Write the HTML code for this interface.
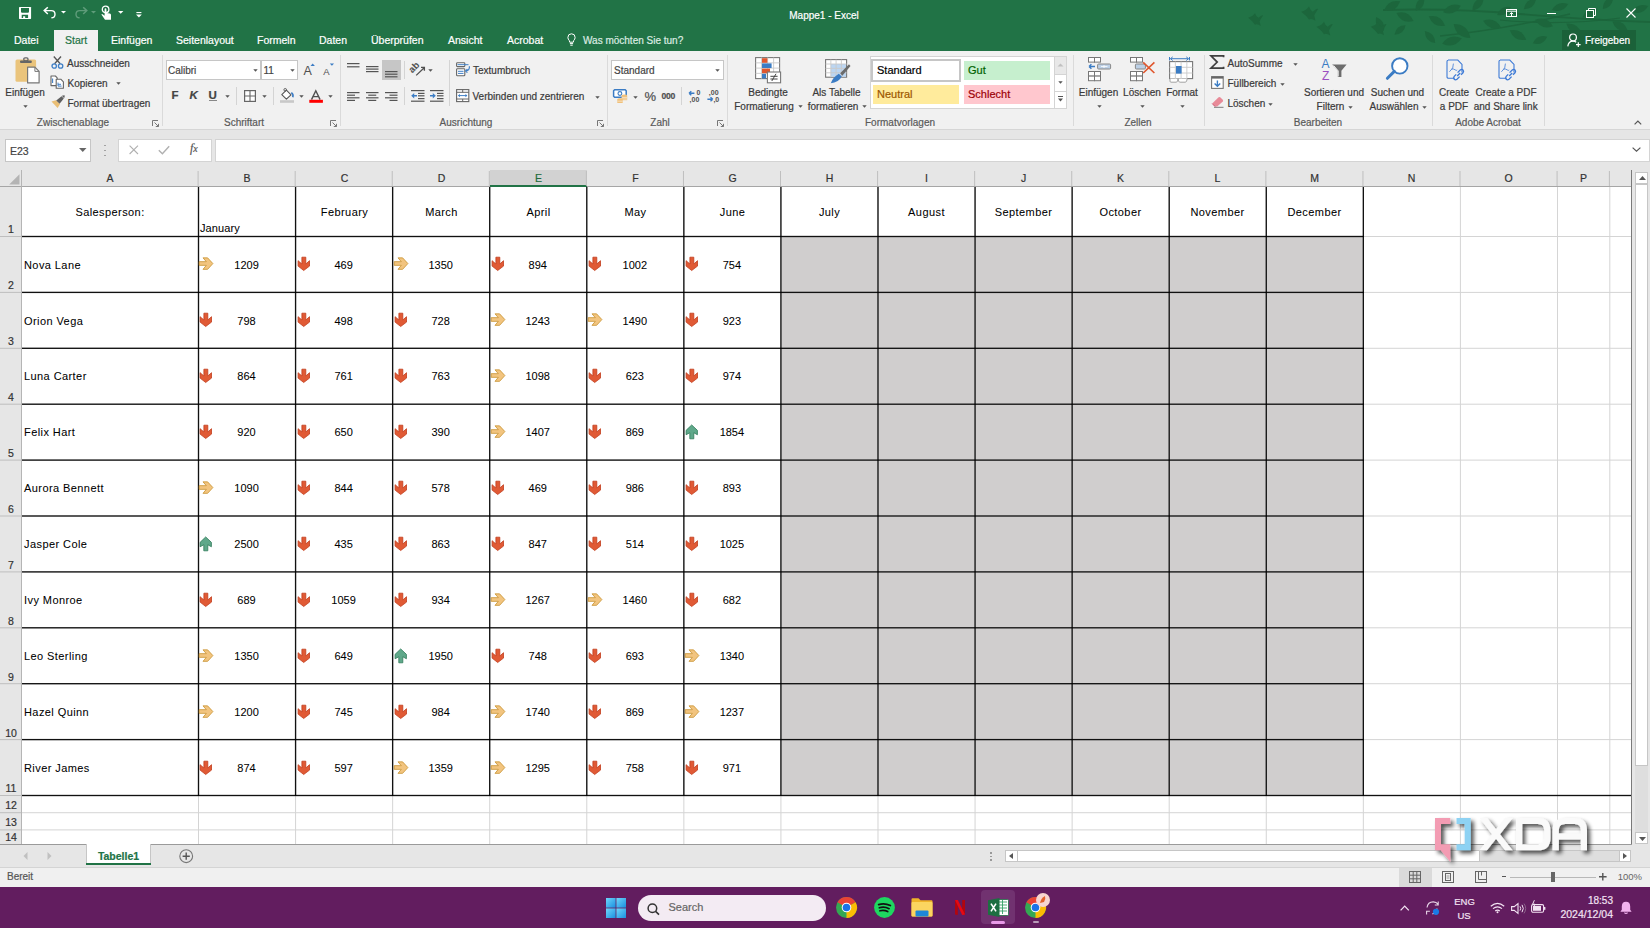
<!DOCTYPE html><html><head><meta charset="utf-8"><style>
*{margin:0;padding:0;box-sizing:border-box}
html,body{width:1650px;height:928px;overflow:hidden;background:#fff}
body{position:relative;font-family:"Liberation Sans",sans-serif}
body div{position:absolute}
.t{white-space:nowrap;line-height:1;-webkit-text-stroke:0.2px currentColor}
svg{position:absolute;overflow:visible}
</style></head><body>
<div style="left:0px;top:0px;width:1650px;height:51px;background:#217346"></div>
<svg style="left:0px;top:0px;" width="1650" height="50" viewBox="0 0 1650 50"><path d="M1383 10 Q1450 8 1520 14 T1650 22" stroke="#1c663c" stroke-width="1.8" fill="none"/><path d="M1440 36 Q1500 30 1570 14" stroke="#1c663c" stroke-width="1.4" fill="none"/><path d="M1500 20 Q1560 26 1620 18" stroke="#1c663c" stroke-width="1.2" fill="none"/><path transform="translate(1392 6) rotate(-30)" d="M-9.424999999999999 0 Q0 -7.916999999999999 9.424999999999999 0 Q0 7.916999999999999 -9.424999999999999 0z" fill="#1c663c"/><path transform="translate(1405 17) rotate(25)" d="M-9.424999999999999 0 Q0 -7.916999999999999 9.424999999999999 0 Q0 7.916999999999999 -9.424999999999999 0z" fill="#1c663c"/><path transform="translate(1420 4) rotate(-60)" d="M-7.975 0 Q0 -6.699 7.975 0 Q0 6.699 -7.975 0z" fill="#1c663c"/><path transform="translate(1437 21) rotate(30)" d="M-9.424999999999999 0 Q0 -7.916999999999999 9.424999999999999 0 Q0 7.916999999999999 -9.424999999999999 0z" fill="#1c663c"/><path transform="translate(1452 9) rotate(-20)" d="M-9.424999999999999 0 Q0 -7.916999999999999 9.424999999999999 0 Q0 7.916999999999999 -9.424999999999999 0z" fill="#1c663c"/><path transform="translate(1462 31) rotate(40)" d="M-10.875 0 Q0 -9.135 10.875 0 Q0 9.135 -10.875 0z" fill="#1c663c"/><path transform="translate(1478 4) rotate(-50)" d="M-8.7 0 Q0 -7.307999999999999 8.7 0 Q0 7.307999999999999 -8.7 0z" fill="#1c663c"/><path transform="translate(1492 24) rotate(20)" d="M-9.424999999999999 0 Q0 -7.916999999999999 9.424999999999999 0 Q0 7.916999999999999 -9.424999999999999 0z" fill="#1c663c"/><path transform="translate(1504 11) rotate(-30)" d="M-7.975 0 Q0 -6.699 7.975 0 Q0 6.699 -7.975 0z" fill="#1c663c"/><path transform="translate(1518 35) rotate(30)" d="M-9.424999999999999 0 Q0 -7.916999999999999 9.424999999999999 0 Q0 7.916999999999999 -9.424999999999999 0z" fill="#1c663c"/><path transform="translate(1530 4) rotate(-40)" d="M-7.975 0 Q0 -6.699 7.975 0 Q0 6.699 -7.975 0z" fill="#1c663c"/><path transform="translate(1544 23) rotate(20)" d="M-9.424999999999999 0 Q0 -7.916999999999999 9.424999999999999 0 Q0 7.916999999999999 -9.424999999999999 0z" fill="#1c663c"/><path transform="translate(1560 7) rotate(-20)" d="M-8.7 0 Q0 -7.307999999999999 8.7 0 Q0 7.307999999999999 -8.7 0z" fill="#1c663c"/><path transform="translate(1574 29) rotate(35)" d="M-9.424999999999999 0 Q0 -7.916999999999999 9.424999999999999 0 Q0 7.916999999999999 -9.424999999999999 0z" fill="#1c663c"/><path transform="translate(1590 13) rotate(-30)" d="M-8.7 0 Q0 -7.307999999999999 8.7 0 Q0 7.307999999999999 -8.7 0z" fill="#1c663c"/><path transform="translate(1608 3) rotate(-50)" d="M-7.975 0 Q0 -6.699 7.975 0 Q0 6.699 -7.975 0z" fill="#1c663c"/><path transform="translate(1620 26) rotate(30)" d="M-8.7 0 Q0 -7.307999999999999 8.7 0 Q0 7.307999999999999 -8.7 0z" fill="#1c663c"/><path transform="translate(1640 9) rotate(-20)" d="M-8.7 0 Q0 -7.307999999999999 8.7 0 Q0 7.307999999999999 -8.7 0z" fill="#1c663c"/><path transform="translate(1452 41) rotate(-15)" d="M-10.15 0 Q0 -8.526 10.15 0 Q0 8.526 -10.15 0z" fill="#1c663c"/><path transform="translate(1430 37) rotate(50)" d="M-7.975 0 Q0 -6.699 7.975 0 Q0 6.699 -7.975 0z" fill="#1c663c"/><path transform="translate(1380 24) rotate(60)" d="M-7.975 0 Q0 -6.699 7.975 0 Q0 6.699 -7.975 0z" fill="#1c663c"/><path transform="translate(1400 30) rotate(-40)" d="M-7.25 0 Q0 -6.09 7.25 0 Q0 6.09 -7.25 0z" fill="#1c663c"/><path transform="translate(1540 40) rotate(-25)" d="M-7.975 0 Q0 -6.699 7.975 0 Q0 6.699 -7.975 0z" fill="#1c663c"/><path transform="translate(1255 19) scale(1.15)" d="M-6 -1 Q-2 -2 0 -5 Q1 -2 3 -1 Q6 -4 7 -3 Q5 0 4 2 L5 6 Q2 4 0 5 Q-2 2 -6 -1z" fill="#1c663c"/><path transform="translate(1309 13) scale(1.3)" d="M-6 -1 Q-2 -2 0 -5 Q1 -2 3 -1 Q6 -4 7 -3 Q5 0 4 2 L5 6 Q2 4 0 5 Q-2 2 -6 -1z" fill="#1c663c"/><path transform="translate(1324 28) scale(1.25)" d="M-6 -1 Q-2 -2 0 -5 Q1 -2 3 -1 Q6 -4 7 -3 Q5 0 4 2 L5 6 Q2 4 0 5 Q-2 2 -6 -1z" fill="#1c663c"/><path transform="translate(1378 28) scale(1.2)" d="M-6 -1 Q-2 -2 0 -5 Q1 -2 3 -1 Q6 -4 7 -3 Q5 0 4 2 L5 6 Q2 4 0 5 Q-2 2 -6 -1z" fill="#1c663c"/></svg>
<div class="t" style="left:824px;top:10.54px;font-size:10px;color:#fff;transform:translateX(-50%);">Mappe1 - Excel</div>
<div style="left:54px;top:30px;width:44px;height:21px;background:#f1f1f1"></div>
<div class="t" style="left:14px;top:35.11px;font-size:10.5px;color:#fff;">Datei</div>
<div class="t" style="left:65px;top:35.11px;font-size:10.5px;color:#217346;">Start</div>
<div class="t" style="left:111px;top:35.11px;font-size:10.5px;color:#fff;">Einfügen</div>
<div class="t" style="left:176px;top:35.11px;font-size:10.5px;color:#fff;">Seitenlayout</div>
<div class="t" style="left:257px;top:35.11px;font-size:10.5px;color:#fff;">Formeln</div>
<div class="t" style="left:319px;top:35.11px;font-size:10.5px;color:#fff;">Daten</div>
<div class="t" style="left:371px;top:35.11px;font-size:10.5px;color:#fff;">Überprüfen</div>
<div class="t" style="left:448px;top:35.11px;font-size:10.5px;color:#fff;">Ansicht</div>
<div class="t" style="left:507px;top:35.11px;font-size:10.5px;color:#fff;">Acrobat</div>
<div class="t" style="left:583px;top:35.53px;font-size:10px;color:#dcebe1;">Was möchten Sie tun?</div>
<div style="left:1562px;top:30px;width:74px;height:20px;background:#1b6139"></div>
<div class="t" style="left:1585px;top:35.53px;font-size:10px;color:#fff;">Freigeben</div>
<svg style="left:18.9px;top:6.9px;" width="12.2" height="12" viewBox="0 0 12.2 12"><rect x="0" y="0" width="12.1" height="11.9" rx="0.6" fill="#fff"/><path d="M2 1.1h8v3.6q0 1.1-1.1 1.1H3.1Q2 5.8 2 4.7z" fill="#217346"/><path d="M2.7 7.7h6.4v3.2H6.2V9.2H4.1v1.7H2.7z" fill="#217346"/></svg>
<svg style="left:43px;top:6px;" width="14" height="13" viewBox="0 0 14 13"><path d="M1.6 4.6h6.6q3.8 0 3.8 3.6t-3.6 3.6" fill="none" stroke="#fff" stroke-width="1.4"/><path d="M4.8 1.2L1.2 4.6 4.8 8" fill="none" stroke="#fff" stroke-width="1.5"/></svg>
<svg style="left:61px;top:11px;" width="5" height="3" viewBox="0 0 5 3"><path d="M0 0h5L2.5 2.6z" fill="#fff"/></svg>
<svg style="left:74px;top:6px;" width="14" height="13" viewBox="0 0 14 13"><path d="M12.4 4.6H5.8q-3.8 0-3.8 3.6t3.6 3.6" fill="none" stroke="#5f9c7a" stroke-width="1.4"/><path d="M9.2 1.2l3.6 3.4L9.2 8" fill="none" stroke="#5f9c7a" stroke-width="1.5"/></svg>
<svg style="left:91px;top:11px;" width="5" height="3" viewBox="0 0 5 3"><path d="M0 0h5L2.5 2.6z" fill="#5f9c7a"/></svg>
<svg style="left:101px;top:5px;" width="11" height="16" viewBox="0 0 11 16"><circle cx="4.6" cy="4.4" r="3.3" fill="none" stroke="#fff" stroke-width="1.3"/><path d="M3.6 4.4v6.4l-1.6-1.4q-1.2-0.8-1.6 0.2l3.6 5.2h6V10q0-1.2-1.2-1.4l-3.4-0.6V4.4q0-1.2-0.9-1.2t-0.9 1.2z" fill="#fff"/></svg>
<svg style="left:118px;top:11px;" width="6" height="3" viewBox="0 0 6 3"><path d="M0 0h5.4L2.7 2.8z" fill="#fff"/></svg>
<svg style="left:136px;top:11.5px;" width="6" height="6" viewBox="0 0 6 6"><rect x="0.4" y="0" width="5" height="1.1" fill="#fff"/><path d="M0 2.6h5.8L2.9 5.6z" fill="#fff"/></svg>
<svg style="left:1506px;top:9px;" width="11" height="8" viewBox="0 0 11 8"><rect x="0.5" y="0.5" width="10" height="7" fill="none" stroke="#fff" stroke-width="1"/><path d="M0.5 2.2h10" stroke="#fff" stroke-width="1"/><path d="M5.5 7V3.8M3.8 5.2l1.7-1.6 1.7 1.6" fill="none" stroke="#fff" stroke-width="1"/></svg>
<div style="left:1547px;top:13px;width:9px;height:1px;background:#fff"></div>
<svg style="left:1586px;top:8px;" width="10" height="10" viewBox="0 0 10 10"><rect x="0.5" y="2.5" width="7" height="7" fill="none" stroke="#fff" stroke-width="1"/><path d="M2.5 2.5V0.5h7v7h-2" fill="none" stroke="#fff" stroke-width="1"/></svg>
<svg style="left:1626px;top:8px;" width="10" height="10" viewBox="0 0 10 10"><path d="M0.5 0.5l9 9M9.5 0.5l-9 9" stroke="#fff" stroke-width="1.1"/></svg>
<svg style="left:1567px;top:33px;" width="14" height="14" viewBox="0 0 14 14"><circle cx="6" cy="4.4" r="3.4" fill="none" stroke="#fff" stroke-width="1.2"/><path d="M0.8 13.4q0.6-5.2 5.2-5.2q2 0 3.2 1" fill="none" stroke="#fff" stroke-width="1.2"/><path d="M9 11.6h4.6M11.3 9.3v4.6" stroke="#fff" stroke-width="1.2"/></svg>
<svg style="left:567px;top:33px;" width="9" height="13" viewBox="0 0 9 13"><path d="M4.5 0.8q3.6 0 3.6 3.6q0 1.8-1.4 3.2l-0.4 1.6H2.7l-0.4-1.6Q0.9 6.2 0.9 4.4q0-3.6 3.6-3.6z" fill="none" stroke="#fff" stroke-width="1"/><path d="M2.9 10.6h3.2M3.3 12.2h2.4" stroke="#fff" stroke-width="1"/></svg>
<div style="left:0px;top:51px;width:1650px;height:79px;background:#f1f1f1"></div>
<div style="left:0px;top:129px;width:1650px;height:1px;background:#d6d6d6"></div>
<div class="t" style="left:73px;top:117.53px;font-size:10px;color:#5a5a5a;transform:translateX(-50%);">Zwischenablage</div>
<div class="t" style="left:244px;top:117.53px;font-size:10px;color:#5a5a5a;transform:translateX(-50%);">Schriftart</div>
<div class="t" style="left:466px;top:117.53px;font-size:10px;color:#5a5a5a;transform:translateX(-50%);">Ausrichtung</div>
<div class="t" style="left:660px;top:117.53px;font-size:10px;color:#5a5a5a;transform:translateX(-50%);">Zahl</div>
<div class="t" style="left:900px;top:117.53px;font-size:10px;color:#5a5a5a;transform:translateX(-50%);">Formatvorlagen</div>
<div class="t" style="left:1138px;top:117.53px;font-size:10px;color:#5a5a5a;transform:translateX(-50%);">Zellen</div>
<div class="t" style="left:1318px;top:117.53px;font-size:10px;color:#5a5a5a;transform:translateX(-50%);">Bearbeiten</div>
<div class="t" style="left:1488px;top:117.53px;font-size:10px;color:#5a5a5a;transform:translateX(-50%);">Adobe Acrobat</div>
<div style="left:162px;top:55px;width:1px;height:71px;background:#dadada"></div>
<div style="left:340px;top:55px;width:1px;height:71px;background:#dadada"></div>
<div style="left:607px;top:55px;width:1px;height:71px;background:#dadada"></div>
<div style="left:727px;top:55px;width:1px;height:71px;background:#dadada"></div>
<div style="left:1073px;top:55px;width:1px;height:71px;background:#dadada"></div>
<div style="left:1204px;top:55px;width:1px;height:71px;background:#dadada"></div>
<div style="left:1432px;top:55px;width:1px;height:71px;background:#dadada"></div>
<div style="left:1544px;top:55px;width:1px;height:71px;background:#dadada"></div>
<div class="t" style="left:25px;top:88.13px;font-size:10px;color:#3a3a3a;transform:translateX(-50%);">Einfügen</div>
<div class="t" style="left:67px;top:59.13px;font-size:10px;color:#3a3a3a;">Ausschneiden</div>
<div class="t" style="left:67.5px;top:78.73px;font-size:10px;color:#3a3a3a;">Kopieren</div>
<div class="t" style="left:67.5px;top:98.83px;font-size:10px;color:#3a3a3a;">Format übertragen</div>
<div style="left:166px;top:60px;width:95px;height:20px;background:#fff;border:1px solid #c6c6c6"></div>
<div style="left:261px;top:60px;width:37px;height:20px;background:#fff;border:1px solid #c6c6c6"></div>
<div class="t" style="left:168px;top:66.13px;font-size:10px;color:#444;">Calibri</div>
<div class="t" style="left:263.5px;top:66.13px;font-size:10px;color:#444;">11</div>
<div class="t" style="left:473px;top:66.33px;font-size:10px;color:#3a3a3a;">Textumbruch</div>
<div class="t" style="left:472.5px;top:92.13px;font-size:10px;color:#3a3a3a;">Verbinden und zentrieren</div>
<div style="left:611px;top:60px;width:113px;height:20px;background:#fff;border:1px solid #c6c6c6"></div>
<div class="t" style="left:614px;top:65.83px;font-size:10px;color:#444;">Standard</div>
<div class="t" style="left:768px;top:87.94px;font-size:10px;color:#3a3a3a;transform:translateX(-50%);">Bedingte</div>
<div class="t" style="left:764px;top:101.83px;font-size:10px;color:#3a3a3a;transform:translateX(-50%);">Formatierung</div>
<div class="t" style="left:836.5px;top:87.94px;font-size:10px;color:#3a3a3a;transform:translateX(-50%);">Als Tabelle</div>
<div class="t" style="left:833px;top:101.83px;font-size:10px;color:#3a3a3a;transform:translateX(-50%);">formatieren</div>
<div style="left:870px;top:56px;width:197px;height:53px;background:#fff;border:1px solid #d4d4d4"></div>
<div style="left:871px;top:59px;width:90px;height:23px;background:#fff;border:2px solid #c6c6c6"></div>
<div style="left:964px;top:61px;width:86px;height:19px;background:#c6efce"></div>
<div style="left:873px;top:85px;width:86px;height:19px;background:#ffeb9c"></div>
<div style="left:964px;top:85px;width:86px;height:19px;background:#ffc7ce"></div>
<div class="t" style="left:877px;top:65.19px;font-size:11px;color:#000;">Standard</div>
<div class="t" style="left:968px;top:65.19px;font-size:11px;color:#006100;">Gut</div>
<div class="t" style="left:877px;top:89.19px;font-size:11px;color:#9c5700;">Neutral</div>
<div class="t" style="left:968px;top:89.19px;font-size:11px;color:#9c0006;">Schlecht</div>
<div class="t" style="left:1098.5px;top:88.13px;font-size:10px;color:#3a3a3a;transform:translateX(-50%);">Einfügen</div>
<div class="t" style="left:1142px;top:88.13px;font-size:10px;color:#3a3a3a;transform:translateX(-50%);">Löschen</div>
<div class="t" style="left:1182px;top:88.13px;font-size:10px;color:#3a3a3a;transform:translateX(-50%);">Format</div>
<div class="t" style="left:1227.5px;top:58.83px;font-size:10px;color:#3a3a3a;">AutoSumme</div>
<div class="t" style="left:1227.5px;top:78.63px;font-size:10px;color:#3a3a3a;">Füllbereich</div>
<div class="t" style="left:1227.5px;top:98.63px;font-size:10px;color:#3a3a3a;">Löschen</div>
<div class="t" style="left:1334px;top:88.44px;font-size:10px;color:#3a3a3a;transform:translateX(-50%);">Sortieren und</div>
<div class="t" style="left:1330.5px;top:102.13px;font-size:10px;color:#3a3a3a;transform:translateX(-50%);">Filtern</div>
<div class="t" style="left:1397.5px;top:88.44px;font-size:10px;color:#3a3a3a;transform:translateX(-50%);">Suchen und</div>
<div class="t" style="left:1394px;top:102.13px;font-size:10px;color:#3a3a3a;transform:translateX(-50%);">Auswählen</div>
<div class="t" style="left:1454px;top:88.44px;font-size:10px;color:#3a3a3a;transform:translateX(-50%);">Create</div>
<div class="t" style="left:1454px;top:102.13px;font-size:10px;color:#3a3a3a;transform:translateX(-50%);">a PDF</div>
<div class="t" style="left:1506px;top:88.44px;font-size:10px;color:#3a3a3a;transform:translateX(-50%);">Create a PDF</div>
<div class="t" style="left:1505.7px;top:102.13px;font-size:10px;color:#3a3a3a;transform:translateX(-50%);">and Share link</div>
<svg style="left:15px;top:57px;" width="26" height="27" viewBox="0 0 26 27">
<rect x="0.5" y="2.6" width="20.6" height="22.2" rx="1.5" fill="#eac47c"/>
<rect x="5" y="3.4" width="11.8" height="2.6" rx="1" fill="#666"/>
<rect x="8.8" y="0.8" width="4.2" height="3" rx="1.2" fill="none" stroke="#666" stroke-width="1.3"/>
<path d="M12.6 10.2h7.3l4.2 4.2v11.5H12.6z" fill="#fff" stroke="#777" stroke-width="1.2" stroke-linejoin="round"/>
<path d="M19.9 10.2v4.2h4.2" fill="none" stroke="#777" stroke-width="1"/>
</svg>
<svg style="left:23px;top:105px;" width="5" height="3" viewBox="0 0 5 3"><path d="M0.3 0.2h4.4L2.5 2.8z" fill="#555"/></svg>
<svg style="left:51px;top:55px;" width="13" height="14" viewBox="0 0 13 14">
<path d="M2.8 1.5L9.2 8.8M10 1.5L3.6 8.8" stroke="#555" stroke-width="1.3" fill="none"/>
<circle cx="3.2" cy="11" r="2.2" fill="none" stroke="#3f7fc6" stroke-width="1.3"/>
<circle cx="9.6" cy="11" r="2.2" fill="none" stroke="#3f7fc6" stroke-width="1.3"/>
</svg>
<svg style="left:50px;top:75px;" width="15" height="14" viewBox="0 0 15 14">
<path d="M1 1h4.4l1.8 1.8v7.8H1z" fill="#fff" stroke="#666" stroke-width="1.1" stroke-linejoin="round"/>
<path d="M2.6 3.5v4.5" stroke="#3f7fc6" stroke-width="1.1"/>
<path d="M6.2 4.2h4.6l2.6 2.6v6.5H6.2z" fill="#fff" stroke="#666" stroke-width="1.1" stroke-linejoin="round"/>
<path d="M8 7.6v3.5M8 11.1h3.6M8 9.3h3" stroke="#3f7fc6" stroke-width="1"/>
</svg>
<svg style="left:116px;top:81.5px;" width="5" height="3" viewBox="0 0 5 3"><path d="M0.3 0.2h4.4L2.5 2.8z" fill="#555"/></svg>
<svg style="left:51px;top:95px;" width="14" height="14" viewBox="0 0 14 14">
<path d="M0.5 6.4L5 5.2 9 9.2 6.6 13z" fill="#eabf76"/>
<path d="M5.2 5.6L10.6 1.3 12.8 3.4 8.6 8.8z" fill="#606060"/>
<path d="M10.8 0.8l2.4-0.6 0.6 0.6-0.6 2.4z" fill="#606060"/>
</svg>
<svg style="left:152px;top:120px;" width="7" height="7" viewBox="0 0 7 7"><path d="M0.5 6V0.5H6" fill="none" stroke="#777" stroke-width="1"/><path d="M2.5 2.5L6.5 6.5M3.8 6.5h2.7V3.8" fill="none" stroke="#777" stroke-width="1"/></svg>
<svg style="left:330px;top:120px;" width="7" height="7" viewBox="0 0 7 7"><path d="M0.5 6V0.5H6" fill="none" stroke="#777" stroke-width="1"/><path d="M2.5 2.5L6.5 6.5M3.8 6.5h2.7V3.8" fill="none" stroke="#777" stroke-width="1"/></svg>
<svg style="left:597px;top:120px;" width="7" height="7" viewBox="0 0 7 7"><path d="M0.5 6V0.5H6" fill="none" stroke="#777" stroke-width="1"/><path d="M2.5 2.5L6.5 6.5M3.8 6.5h2.7V3.8" fill="none" stroke="#777" stroke-width="1"/></svg>
<svg style="left:717px;top:120px;" width="7" height="7" viewBox="0 0 7 7"><path d="M0.5 6V0.5H6" fill="none" stroke="#777" stroke-width="1"/><path d="M2.5 2.5L6.5 6.5M3.8 6.5h2.7V3.8" fill="none" stroke="#777" stroke-width="1"/></svg>
<svg style="left:252.5px;top:68.5px;" width="5" height="3" viewBox="0 0 5 3"><path d="M0.3 0.2h4.4L2.5 2.8z" fill="#555"/></svg>
<svg style="left:289.5px;top:68.5px;" width="5" height="3" viewBox="0 0 5 3"><path d="M0.3 0.2h4.4L2.5 2.8z" fill="#555"/></svg>
<svg style="left:303px;top:63px;" width="12" height="12" viewBox="0 0 12 12"><text x="0.5" y="11.8" font-family="Liberation Sans" font-size="12.5" fill="#505050">A</text><path d="M7.5 3L9.7 0.6 11.9 3z" fill="#3b7cc4"/></svg>
<svg style="left:322px;top:63px;" width="12" height="12" viewBox="0 0 12 12"><text x="1.2" y="11.8" font-family="Liberation Sans" font-size="9.5" fill="#505050">A</text><path d="M7.8 0.4h4.2L9.9 2.8z" fill="#3b7cc4"/></svg>
<div class="t" style="left:171.5px;top:90px;font-size:11.5px;font-weight:bold;color:#444">F</div>
<div class="t" style="left:189.5px;top:90px;font-size:11.5px;font-weight:bold;font-style:italic;color:#444">K</div>
<div class="t" style="left:208.5px;top:90px;font-size:11.5px;font-weight:bold;color:#444">U</div>
<div style="left:209px;top:100px;width:7.5px;height:1.3px;background:#888"></div>
<svg style="left:225px;top:95px;" width="5" height="3" viewBox="0 0 5 3"><path d="M0.3 0.2h4.4L2.5 2.8z" fill="#555"/></svg>
<svg style="left:262px;top:95px;" width="5" height="3" viewBox="0 0 5 3"><path d="M0.3 0.2h4.4L2.5 2.8z" fill="#555"/></svg>
<svg style="left:299px;top:95px;" width="5" height="3" viewBox="0 0 5 3"><path d="M0.3 0.2h4.4L2.5 2.8z" fill="#555"/></svg>
<svg style="left:328px;top:95px;" width="5" height="3" viewBox="0 0 5 3"><path d="M0.3 0.2h4.4L2.5 2.8z" fill="#555"/></svg>
<div style="left:236px;top:87px;width:1px;height:18px;background:#d4d4d4"></div>
<div style="left:273px;top:87px;width:1px;height:18px;background:#d4d4d4"></div>
<svg style="left:244px;top:90px;" width="12" height="12" viewBox="0 0 12 12"><rect x="0.6" y="0.6" width="10.8" height="10.8" fill="#fff" stroke="#666" stroke-width="1.2"/><path d="M6 0.6v10.8M0.6 6h10.8" stroke="#666" stroke-width="1.1"/></svg>
<svg style="left:280px;top:88px;" width="15" height="15" viewBox="0 0 15 15">
<path d="M1.8 6.6L6.4 2.2 11 6.8 6.4 11.2z" fill="#fff" stroke="#555" stroke-width="1.1" stroke-linejoin="round"/>
<circle cx="5.2" cy="1.8" r="1.3" fill="none" stroke="#555" stroke-width="0.9"/>
<path d="M11.3 4.6q2.4 1.6 1.5 4.6" fill="none" stroke="#3b7cc4" stroke-width="1.6"/>
<rect x="0" y="12.2" width="14" height="2.6" fill="#c8c8c8"/>
</svg>
<svg style="left:309px;top:90px;" width="14" height="13" viewBox="0 0 14 13"><path d="M2.5 9.6L6.8 0.8 11.1 9.6M4.4 6.6h4.8" fill="none" stroke="#505050" stroke-width="1.4"/><rect x="0.3" y="9.8" width="13.6" height="3" fill="#f00"/></svg>
<svg style="left:347px;top:62.5px;" width="14" height="14" viewBox="0 0 14 14"><rect x="0" y="0.0" width="12.5" height="1.2" fill="#555"/><rect x="0" y="3.2" width="12.5" height="1.2" fill="#555"/></svg>
<svg style="left:366px;top:66px;" width="14" height="14" viewBox="0 0 14 14"><rect x="0" y="0.0" width="12.5" height="1.2" fill="#555"/><rect x="0" y="2.5" width="12.5" height="1.2" fill="#555"/><rect x="0" y="5.0" width="12.5" height="1.2" fill="#555"/></svg>
<div style="left:382px;top:60px;width:18.5px;height:20px;background:#c6c6c6"></div>
<svg style="left:385px;top:71px;" width="14" height="14" viewBox="0 0 14 14"><rect x="0" y="0.0" width="12.5" height="1.2" fill="#555"/><rect x="0" y="2.6" width="12.5" height="1.2" fill="#555"/><rect x="0" y="5.2" width="12.5" height="1.2" fill="#555"/></svg>
<svg style="left:347px;top:92px;" width="14" height="14" viewBox="0 0 14 14"><rect x="0" y="0.0" width="12.5" height="1.2" fill="#555"/><rect x="0" y="2.6" width="8" height="1.2" fill="#555"/><rect x="0" y="5.2" width="12.5" height="1.2" fill="#555"/><rect x="0" y="7.800000000000001" width="8" height="1.2" fill="#555"/></svg>
<svg style="left:366px;top:92px;" width="14" height="14" viewBox="0 0 14 14"><rect x="0" y="0.0" width="12.5" height="1.2" fill="#555"/><rect x="2.25" y="2.6" width="8" height="1.2" fill="#555"/><rect x="0" y="5.2" width="12.5" height="1.2" fill="#555"/><rect x="2.25" y="7.800000000000001" width="8" height="1.2" fill="#555"/></svg>
<svg style="left:385px;top:92px;" width="14" height="14" viewBox="0 0 14 14"><rect x="0" y="0.0" width="12.5" height="1.2" fill="#555"/><rect x="4.5" y="2.6" width="8" height="1.2" fill="#555"/><rect x="0" y="5.2" width="12.5" height="1.2" fill="#555"/><rect x="4.5" y="7.800000000000001" width="8" height="1.2" fill="#555"/></svg>
<div style="left:404px;top:61px;width:1px;height:18px;background:#d4d4d4"></div>
<div style="left:404px;top:87px;width:1px;height:18px;background:#d4d4d4"></div>
<svg style="left:410px;top:62px;" width="16" height="14" viewBox="0 0 16 14"><text x="0" y="0" font-family="Liberation Sans" font-size="9.5" font-weight="bold" fill="#505050" transform="translate(2.2 11.6) rotate(-45)">ab</text><path d="M6.2 13.4L14.2 5.8M11 5.4h3.4v3.4" fill="none" stroke="#505050" stroke-width="1.3"/></svg>
<svg style="left:428px;top:69px;" width="5" height="3" viewBox="0 0 5 3"><path d="M0.3 0.2h4.4L2.5 2.8z" fill="#555"/></svg>
<svg style="left:411px;top:90px;" width="14" height="12" viewBox="0 0 14 12"><rect x="0" y="0" width="13.5" height="1.2" fill="#555"/><rect x="7" y="2.8" width="6.5" height="1.2" fill="#555"/><rect x="7" y="5.2" width="6.5" height="1.2" fill="#555"/><rect x="7" y="8" width="6.5" height="1.2" fill="#555"/><rect x="0" y="10.6" width="13.5" height="1.2" fill="#555"/><path d="M0.2 5.8L3.2 3v2h2.8v1.6H3.2v2z" fill="#3b7cc4"/></svg>
<svg style="left:430px;top:90px;" width="14" height="12" viewBox="0 0 14 12"><rect x="0" y="0" width="13.5" height="1.2" fill="#555"/><rect x="7" y="2.8" width="6.5" height="1.2" fill="#555"/><rect x="7" y="5.2" width="6.5" height="1.2" fill="#555"/><rect x="7" y="8" width="6.5" height="1.2" fill="#555"/><rect x="0" y="10.6" width="13.5" height="1.2" fill="#555"/><path d="M5.8 5.8L2.8 3v2H0v1.6h2.8v2z" fill="#3b7cc4"/></svg>
<div style="left:449px;top:60px;width:1px;height:46px;background:#d4d4d4"></div>
<svg style="left:456px;top:62px;" width="14" height="15" viewBox="0 0 14 15">
<rect x="0.6" y="0.8" width="8.2" height="3.8" rx="0.8" fill="#fff" stroke="#666" stroke-width="1.1"/>
<rect x="0.6" y="6.8" width="8.2" height="7" rx="0.8" fill="#fff" stroke="#666" stroke-width="1.1"/>
<path d="M1.5 2.7h11" stroke="#3f7fc6" stroke-width="1"/>
<path d="M2 9.3h5.5M2 11.4h5.5" stroke="#3f7fc6" stroke-width="1"/>
<path d="M13.4 4.2q0.4 4.5-3.6 4.8M11.4 7.2l-1.8 1.8 1.8 1.6" fill="none" stroke="#3f7fc6" stroke-width="1.2"/>
</svg>
<svg style="left:456px;top:89px;" width="14" height="13" viewBox="0 0 14 13">
<rect x="0.6" y="0.6" width="12.2" height="12" fill="#fff" stroke="#666" stroke-width="1.1"/>
<path d="M0.6 3.3h12.2M0.6 10h12.2M6.7 0.6v2.7M6.7 10v2.6" stroke="#666" stroke-width="1"/>
<path d="M2.4 6.6h8.6" stroke="#3f7fc6" stroke-width="1"/>
<path d="M2 6.6l2-1.6v3.2zM11.4 6.6l-2-1.6v3.2z" fill="#3f7fc6"/>
</svg>
<svg style="left:594.5px;top:96px;" width="5" height="3" viewBox="0 0 5 3"><path d="M0.3 0.2h4.4L2.5 2.8z" fill="#555"/></svg>
<svg style="left:715px;top:69px;" width="5" height="3" viewBox="0 0 5 3"><path d="M0.3 0.2h4.4L2.5 2.8z" fill="#555"/></svg>
<svg style="left:613px;top:89px;" width="16" height="15" viewBox="0 0 16 15">
<path d="M1.6 0.8h10.6l1 1v5.4l-1 1H1.6l-1-1V1.8z" fill="#fff" stroke="#3b7cc4" stroke-width="1.5"/>
<circle cx="6.9" cy="4.5" r="1.9" fill="none" stroke="#3b7cc4" stroke-width="1.1"/>
<ellipse cx="11.4" cy="6.6" rx="2.8" ry="1.1" fill="#f0c07a"/><rect x="8.6" y="6.6" width="5.6" height="4.6" fill="#f0c07a"/><path d="M8.8 8.4h5.2M8.8 10h5.2" stroke="#fff" stroke-width="0.5"/>
<ellipse cx="7" cy="10.4" rx="2.7" ry="1.1" fill="#f0c07a"/><rect x="4.3" y="10.4" width="5.4" height="3.6" fill="#f0c07a"/><path d="M4.5 12.2h5" stroke="#fff" stroke-width="0.5"/>
</svg>
<svg style="left:632.5px;top:95.5px;" width="5" height="3" viewBox="0 0 5 3"><path d="M0.3 0.2h4.4L2.5 2.8z" fill="#555"/></svg>
<div class="t" style="left:644.5px;top:90.3px;font-size:13px;color:#505050">%</div>
<div class="t" style="left:661.5px;top:91.6px;font-size:8.6px;font-weight:bold;color:#505050;letter-spacing:-0.3px">000</div>
<div style="left:681px;top:87px;width:1px;height:18px;background:#d4d4d4"></div>
<svg style="left:688px;top:89px;" width="14" height="14" viewBox="0 0 14 14"><text x="8.6" y="5.6" font-family="Liberation Sans" font-size="7" font-weight="bold" fill="#505050">0</text><text x="1.6" y="13.4" font-family="Liberation Sans" font-size="7" font-weight="bold" fill="#505050">,00</text><path d="M1 4.2h5.4M1 4.2l2.3-2M1 4.2l2.3 2" stroke="#3b7cc4" stroke-width="1.4" fill="none"/></svg>
<svg style="left:708px;top:89px;" width="14" height="14" viewBox="0 0 14 14"><text x="0.8" y="5.6" font-family="Liberation Sans" font-size="7" font-weight="bold" fill="#505050">,00</text><text x="5.4" y="13.4" font-family="Liberation Sans" font-size="7" font-weight="bold" fill="#505050">,0</text><path d="M-0.6 10.2h5.4M4.8 10.2l-2.3-2M4.8 10.2l-2.3 2" stroke="#3b7cc4" stroke-width="1.4" fill="none"/></svg>
<svg style="left:755px;top:57px;" width="26" height="26" viewBox="0 0 26 26"><rect x="0.6" y="0.6" width="24" height="21" fill="#fff" stroke="#777" stroke-width="1.1"/><path d="M6.6 0.6v21" stroke="#c8c8c8" stroke-width="0.9"/><path d="M12.6 0.6v21" stroke="#c8c8c8" stroke-width="0.9"/><path d="M18.6 0.6v21" stroke="#c8c8c8" stroke-width="0.9"/><path d="M0.6 5.85h24" stroke="#c8c8c8" stroke-width="0.9"/><path d="M0.6 11.1h24" stroke="#c8c8c8" stroke-width="0.9"/><path d="M0.6 16.35h24" stroke="#c8c8c8" stroke-width="0.9"/><rect x="7" y="1.2" width="5.4" height="4.6" fill="#e0572e"/><rect x="7" y="6.4" width="9.6" height="4.6" fill="#3b7cc4"/><rect x="7" y="11.6" width="8" height="4.6" fill="#e0572e"/><rect x="7" y="16.8" width="4" height="4.6" fill="#3b7cc4"/><rect x="12.4" y="15" width="13.2" height="10.8" fill="#fff" stroke="#777" stroke-width="1.1"/><path d="M15.4 19.3h7.2M15.4 22h7.2M21 16.8l-4.2 7.2" stroke="#444" stroke-width="1"/></svg>
<svg style="left:798px;top:105px;" width="5" height="3" viewBox="0 0 5 3"><path d="M0.3 0.2h4.4L2.5 2.8z" fill="#555"/></svg>
<svg style="left:825px;top:59px;" width="26" height="26" viewBox="0 0 26 26"><rect x="0.6" y="0.6" width="21" height="17.6" fill="#fff" stroke="#777" stroke-width="1.1"/><rect x="5.8" y="5" width="15.2" height="12.6" fill="#bcd6f2"/><path d="M5.85 0.6v17.6" stroke="#c8c8c8" stroke-width="0.9"/><path d="M11.1 0.6v17.6" stroke="#c8c8c8" stroke-width="0.9"/><path d="M16.35 0.6v17.6" stroke="#c8c8c8" stroke-width="0.9"/><path d="M0.6 5.0h21" stroke="#c8c8c8" stroke-width="0.9"/><path d="M0.6 9.4h21" stroke="#c8c8c8" stroke-width="0.9"/><path d="M0.6 13.8h21" stroke="#c8c8c8" stroke-width="0.9"/><path d="M15.2 14.2L24 5.2l1.5 1.8-8.2 9.8z" fill="#6b6b6b"/><path d="M5.8 24.2q2-5.8 8-9.4l3 2.8q-3.4 6.4-11 6.6z" fill="#3b7cc4"/></svg>
<svg style="left:861.5px;top:105px;" width="5" height="3" viewBox="0 0 5 3"><path d="M0.3 0.2h4.4L2.5 2.8z" fill="#555"/></svg>
<div style="left:1054px;top:56px;width:13px;height:53px;background:#fff;border:1px solid #d4d4d4"></div>
<div style="left:1055px;top:57px;width:11px;height:17px;background:#e8e8e8"></div>
<svg style="left:1057px;top:63px;" width="7" height="4" viewBox="0 0 7 4"><path d="M0.5 3.5L3.5 0.5 6.5 3.5z" fill="#c0c0c0"/></svg>
<div style="left:1055px;top:74px;width:11px;height:1px;background:#d4d4d4"></div>
<svg style="left:1058px;top:81px;" width="5" height="3" viewBox="0 0 5 3"><path d="M0.3 0.2h4.4L2.5 2.8z" fill="#555"/></svg>
<div style="left:1055px;top:91px;width:11px;height:1px;background:#d4d4d4"></div>
<svg style="left:1058px;top:96px;" width="6" height="6" viewBox="0 0 6 6"><rect x="0" y="0" width="5" height="1" fill="#555"/><path d="M0 2.5h5L2.5 5.5z" fill="#555"/></svg>
<svg style="left:1096.5px;top:105px;" width="5" height="3" viewBox="0 0 5 3"><path d="M0.3 0.2h4.4L2.5 2.8z" fill="#555"/></svg>
<svg style="left:1140px;top:105px;" width="5" height="3" viewBox="0 0 5 3"><path d="M0.3 0.2h4.4L2.5 2.8z" fill="#555"/></svg>
<svg style="left:1180px;top:105px;" width="5" height="3" viewBox="0 0 5 3"><path d="M0.3 0.2h4.4L2.5 2.8z" fill="#555"/></svg>
<svg style="left:1088px;top:57px;" width="24" height="25" viewBox="0 0 24 25"><rect x="0.5" y="0.5" width="6" height="4.6" fill="#fff" stroke="#777" stroke-width="1"/><rect x="6.5" y="0.5" width="6" height="4.6" fill="#fff" stroke="#777" stroke-width="1"/><rect x="0.5" y="14.5" width="6" height="4.6" fill="#fff" stroke="#777" stroke-width="1"/><rect x="6.5" y="14.5" width="6" height="4.6" fill="#fff" stroke="#777" stroke-width="1"/><rect x="0.5" y="19.1" width="6" height="4.6" fill="#fff" stroke="#777" stroke-width="1"/><rect x="6.5" y="19.1" width="6" height="4.6" fill="#fff" stroke="#777" stroke-width="1"/><rect x="9.6" y="7" width="13" height="5" rx="1" fill="#bcd0e6" stroke="#888" stroke-width="1"/><path d="M13 9.5h6.5M16 8v3" stroke="#fff" stroke-width="0.8"/><path d="M1 9.5h6M1 9.5l2.4-2.2M1 9.5l2.4 2.2" stroke="#3b7cc4" stroke-width="1.4" fill="none"/></svg>
<svg style="left:1130px;top:57px;" width="26" height="25" viewBox="0 0 26 25"><rect x="0.5" y="0.5" width="6" height="4.6" fill="#fff" stroke="#777" stroke-width="1"/><rect x="6.5" y="0.5" width="6" height="4.6" fill="#fff" stroke="#777" stroke-width="1"/><rect x="0.5" y="14.5" width="6" height="4.6" fill="#fff" stroke="#777" stroke-width="1"/><rect x="6.5" y="14.5" width="6" height="4.6" fill="#fff" stroke="#777" stroke-width="1"/><rect x="0.5" y="19.1" width="6" height="4.6" fill="#fff" stroke="#777" stroke-width="1"/><rect x="6.5" y="19.1" width="6" height="4.6" fill="#fff" stroke="#777" stroke-width="1"/><rect x="5.4" y="7" width="10" height="5" rx="1" fill="#bcd0e6" stroke="#888" stroke-width="1"/><path d="M13.2 5.4L24.4 16M24.4 5.4L13.2 16" stroke="#e0572e" stroke-width="1.6"/></svg>
<svg style="left:1169px;top:56px;" width="26" height="28" viewBox="0 0 26 28"><path d="M0.5 1v3.4M20.5 1v3.4M1.5 2.7h18M1.5 2.7l2.2-1.8M1.5 2.7l2.2 1.8M19.5 2.7l-2.2-1.8M19.5 2.7l-2.2 1.8" stroke="#3b7cc4" stroke-width="1" fill="none"/><rect x="0.6" y="5.6" width="23" height="17" fill="#fff" stroke="#777" stroke-width="1.1"/><path d="M6.35 5.6v17" stroke="#c8c8c8" stroke-width="0.9"/><path d="M12.1 5.6v17" stroke="#c8c8c8" stroke-width="0.9"/><path d="M17.85 5.6v17" stroke="#c8c8c8" stroke-width="0.9"/><path d="M0.6 11.3h23" stroke="#c8c8c8" stroke-width="0.9"/><path d="M0.6 17.0h23" stroke="#c8c8c8" stroke-width="0.9"/><rect x="7" y="10" width="5.6" height="7.6" fill="#3b7cc4"/><path d="M1 22.6v2.6q0 1 1 1h5q1 0 1.5-1l0.6-2.6M9 22.6l0.6 2.6q0.5 1 1.5 1h5q1 0 1.5-1l0.6-2.6" fill="#fff" stroke="#999" stroke-width="0.9"/></svg>
<svg style="left:1210px;top:55px;" width="15" height="14" viewBox="0 0 15 14"><path d="M13.6 2.3V0.9H1l6.2 6.2L1 13.1h12.6v-1.4" fill="none" stroke="#404040" stroke-width="1.7" stroke-linejoin="miter"/></svg>
<svg style="left:1293px;top:63px;" width="5" height="3" viewBox="0 0 5 3"><path d="M0.3 0.2h4.4L2.5 2.8z" fill="#555"/></svg>
<svg style="left:1211px;top:76px;" width="13" height="13" viewBox="0 0 13 13"><rect x="0.6" y="0.6" width="11.6" height="11.8" fill="#fff" stroke="#777" stroke-width="1.1"/><rect x="0.6" y="0.6" width="11.6" height="2" fill="#666"/><path d="M6.4 4.4v5.8M3.6 7.4l2.8 2.8 2.8-2.8" fill="none" stroke="#3b7cc4" stroke-width="1.4"/></svg>
<svg style="left:1279.5px;top:83px;" width="5" height="3" viewBox="0 0 5 3"><path d="M0.3 0.2h4.4L2.5 2.8z" fill="#555"/></svg>
<svg style="left:1211px;top:96px;" width="13" height="12" viewBox="0 0 13 12"><path d="M1.2 7.6L7.6 1.2q0.8-0.6 1.6 0l2.6 2.6q0.6 0.8 0 1.6L6.2 10.6H3.6z" fill="#e88a98"/><path d="M1.2 7.6l3 3" stroke="#d0607a" stroke-width="1"/><rect x="3" y="10.8" width="9.5" height="1.1" fill="#888"/></svg>
<svg style="left:1268px;top:103px;" width="5" height="3" viewBox="0 0 5 3"><path d="M0.3 0.2h4.4L2.5 2.8z" fill="#555"/></svg>
<svg style="left:1321px;top:57px;" width="27" height="25" viewBox="0 0 27 25"><text x="0.5" y="11.3" font-family="Liberation Sans" font-size="12" fill="#3b7cc4">A</text><text x="1" y="23.4" font-family="Liberation Sans" font-size="12" fill="#9b4fc0">Z</text><path d="M11.2 7.5h14.4l-5.2 6.2v6.4h-3.6v-6.4z" fill="#6d6d6d"/><path d="M12.6 8.5l4.6 5.4v5.6" fill="none" stroke="#fff" stroke-width="0.9"/></svg>
<svg style="left:1347.5px;top:106px;" width="5" height="3" viewBox="0 0 5 3"><path d="M0.3 0.2h4.4L2.5 2.8z" fill="#555"/></svg>
<svg style="left:1385px;top:56px;" width="25" height="25" viewBox="0 0 25 25"><circle cx="14.8" cy="9.9" r="7.7" fill="#fff" stroke="#3b7cc4" stroke-width="1.9"/><path d="M9.3 15.4L2.4 22.3" stroke="#3b7cc4" stroke-width="3" stroke-linecap="round"/></svg>
<svg style="left:1421.5px;top:106px;" width="5" height="3" viewBox="0 0 5 3"><path d="M0.3 0.2h4.4L2.5 2.8z" fill="#555"/></svg>
<svg style="left:1446px;top:58.5px;" width="19" height="24" viewBox="0 0 19 24"><path d="M2 1h9.8l4.2 4.4v8.2M8.6 19.3H2.6q-1.6 0-1.6-1.6V2.6Q1 1 2.6 1" fill="none" stroke="#3d7ad6" stroke-width="1.1"/>
<path d="M7.4 4.6q0.6 4.8-4 8.2M5.4 10q2.4-0.4 4.4 1.2q1 0.4 1.4-0.2" fill="none" stroke="#3d7ad6" stroke-width="0.8"/>
<path d="M11.6 13.6l2.6-2.6q1.6-1.2 2.8 0t0 2.8l-2 2M13.6 17.6l-2.6 2.6q-1.6 1.2-2.8 0t0-2.8l2-2M11.2 17l3-3" fill="none" stroke="#3d7ad6" stroke-width="1.3"/></svg>
<svg style="left:1498px;top:58.5px;" width="19" height="24" viewBox="0 0 19 24"><path d="M2 1h9.8l4.2 4.4v8.2M8.6 19.3H2.6q-1.6 0-1.6-1.6V2.6Q1 1 2.6 1" fill="none" stroke="#3d7ad6" stroke-width="1.1"/>
<path d="M7.4 4.6q0.6 4.8-4 8.2M5.4 10q2.4-0.4 4.4 1.2q1 0.4 1.4-0.2" fill="none" stroke="#3d7ad6" stroke-width="0.8"/>
<path d="M11.6 13.6l2.6-2.6q1.6-1.2 2.8 0t0 2.8l-2 2M13.6 17.6l-2.6 2.6q-1.6 1.2-2.8 0t0-2.8l2-2M11.2 17l3-3" fill="none" stroke="#3d7ad6" stroke-width="1.3"/></svg>
<svg style="left:1634px;top:120px;" width="8" height="5" viewBox="0 0 8 5"><path d="M0.6 4.4L3.9 1.1 7.2 4.4" fill="none" stroke="#555" stroke-width="1.2"/></svg>
<div style="left:0px;top:130px;width:1650px;height:40px;background:#e6e6e6"></div>
<div style="left:5px;top:139px;width:86px;height:23px;background:#fff;border:1px solid #c6c6c6"></div>
<div class="t" style="left:10px;top:146.11px;font-size:10.5px;color:#444;">E23</div>
<div style="left:118px;top:139px;width:94px;height:23px;background:#fff;border:1px solid #d4d4d4"></div>
<div style="left:215px;top:139px;width:1435px;height:23px;background:#fff;border:1px solid #d4d4d4"></div>
<svg style="left:79px;top:147.5px;" width="7" height="4" viewBox="0 0 7 4"><path d="M0 0h7.5L3.75 4z" fill="#666"/></svg>
<div style="left:104px;top:144.5px;width:1.6px;height:1.6px;background:#999;border-radius:1px"></div>
<div style="left:104px;top:149.5px;width:1.6px;height:1.6px;background:#999;border-radius:1px"></div>
<div style="left:104px;top:154.5px;width:1.6px;height:1.6px;background:#999;border-radius:1px"></div>
<svg style="left:129px;top:145px;" width="10" height="10" viewBox="0 0 10 10"><path d="M0.6 0.6l8.4 8.4M9 0.6L0.6 9" stroke="#b0b0b0" stroke-width="1.1"/></svg>
<svg style="left:158px;top:145px;" width="12" height="10" viewBox="0 0 12 10"><path d="M0.8 5.2l3.6 3.6 6.8-7.6" fill="none" stroke="#b0b0b0" stroke-width="1.4"/></svg>
<div class="t" style="left:190px;top:142px;font-family:'Liberation Serif',serif;font-size:12px;font-style:italic;color:#555">f<span style="font-size:10px">x</span></div>
<svg style="left:1632px;top:147px;" width="9" height="5" viewBox="0 0 9 5"><path d="M0.6 0.6l3.9 3.6 3.9-3.6" fill="none" stroke="#555" stroke-width="1.2"/></svg>
<div style="left:0px;top:170px;width:1632px;height:16px;background:#e6e6e6"></div>
<div style="left:0px;top:186px;width:1632px;height:1px;background:#a6a6a6"></div>
<div style="left:0px;top:187px;width:22px;height:657px;background:#e6e6e6"></div>
<div style="left:21px;top:170px;width:1px;height:674px;background:#b5b5b5"></div>
<div style="left:22px;top:187px;width:1609px;height:657px;background:#fff"></div>
<div style="left:781px;top:237px;width:582px;height:558px;background:#d0cece"></div>
<div style="left:198px;top:187px;width:1px;height:657px;background:rgba(212,212,212,1.000)"></div>
<div style="left:295px;top:187px;width:1px;height:657px;background:rgba(212,212,212,0.930)"></div>
<div style="left:296px;top:187px;width:1px;height:657px;background:rgba(212,212,212,0.070)"></div>
<div style="left:392px;top:187px;width:1px;height:657px;background:rgba(212,212,212,0.860)"></div>
<div style="left:393px;top:187px;width:1px;height:657px;background:rgba(212,212,212,0.140)"></div>
<div style="left:489px;top:187px;width:1px;height:657px;background:rgba(212,212,212,0.790)"></div>
<div style="left:490px;top:187px;width:1px;height:657px;background:rgba(212,212,212,0.210)"></div>
<div style="left:586px;top:187px;width:1px;height:657px;background:rgba(212,212,212,0.720)"></div>
<div style="left:587px;top:187px;width:1px;height:657px;background:rgba(212,212,212,0.280)"></div>
<div style="left:683px;top:187px;width:1px;height:657px;background:rgba(212,212,212,0.650)"></div>
<div style="left:684px;top:187px;width:1px;height:657px;background:rgba(212,212,212,0.350)"></div>
<div style="left:780px;top:187px;width:1px;height:657px;background:rgba(212,212,212,0.580)"></div>
<div style="left:781px;top:187px;width:1px;height:657px;background:rgba(212,212,212,0.420)"></div>
<div style="left:877px;top:187px;width:1px;height:657px;background:rgba(212,212,212,0.510)"></div>
<div style="left:878px;top:187px;width:1px;height:657px;background:rgba(212,212,212,0.490)"></div>
<div style="left:974px;top:187px;width:1px;height:657px;background:rgba(212,212,212,0.440)"></div>
<div style="left:975px;top:187px;width:1px;height:657px;background:rgba(212,212,212,0.560)"></div>
<div style="left:1071px;top:187px;width:1px;height:657px;background:rgba(212,212,212,0.370)"></div>
<div style="left:1072px;top:187px;width:1px;height:657px;background:rgba(212,212,212,0.630)"></div>
<div style="left:1168px;top:187px;width:1px;height:657px;background:rgba(212,212,212,0.300)"></div>
<div style="left:1169px;top:187px;width:1px;height:657px;background:rgba(212,212,212,0.700)"></div>
<div style="left:1265px;top:187px;width:1px;height:657px;background:rgba(212,212,212,0.230)"></div>
<div style="left:1266px;top:187px;width:1px;height:657px;background:rgba(212,212,212,0.770)"></div>
<div style="left:1362px;top:187px;width:1px;height:657px;background:rgba(212,212,212,0.160)"></div>
<div style="left:1363px;top:187px;width:1px;height:657px;background:rgba(212,212,212,0.840)"></div>
<div style="left:1459px;top:187px;width:1px;height:657px;background:rgba(212,212,212,0.090)"></div>
<div style="left:1460px;top:187px;width:1px;height:657px;background:rgba(212,212,212,0.910)"></div>
<div style="left:1557px;top:187px;width:1px;height:657px;background:rgba(212,212,212,0.980)"></div>
<div style="left:1609px;top:187px;width:1px;height:657px;background:rgba(212,212,212,0.700)"></div>
<div style="left:1610px;top:187px;width:1px;height:657px;background:rgba(212,212,212,0.300)"></div>
<div style="left:22px;top:236px;width:1609px;height:1px;background:rgba(212,212,212,1.000)"></div>
<div style="left:22px;top:291px;width:1609px;height:1px;background:rgba(212,212,212,0.100)"></div>
<div style="left:22px;top:292px;width:1609px;height:1px;background:rgba(212,212,212,0.900)"></div>
<div style="left:22px;top:347px;width:1609px;height:1px;background:rgba(212,212,212,0.200)"></div>
<div style="left:22px;top:348px;width:1609px;height:1px;background:rgba(212,212,212,0.800)"></div>
<div style="left:22px;top:403px;width:1609px;height:1px;background:rgba(212,212,212,0.300)"></div>
<div style="left:22px;top:404px;width:1609px;height:1px;background:rgba(212,212,212,0.700)"></div>
<div style="left:22px;top:459px;width:1609px;height:1px;background:rgba(212,212,212,0.400)"></div>
<div style="left:22px;top:460px;width:1609px;height:1px;background:rgba(212,212,212,0.600)"></div>
<div style="left:22px;top:515px;width:1609px;height:1px;background:rgba(212,212,212,0.500)"></div>
<div style="left:22px;top:516px;width:1609px;height:1px;background:rgba(212,212,212,0.500)"></div>
<div style="left:22px;top:571px;width:1609px;height:1px;background:rgba(212,212,212,0.600)"></div>
<div style="left:22px;top:572px;width:1609px;height:1px;background:rgba(212,212,212,0.400)"></div>
<div style="left:22px;top:627px;width:1609px;height:1px;background:rgba(212,212,212,0.700)"></div>
<div style="left:22px;top:628px;width:1609px;height:1px;background:rgba(212,212,212,0.300)"></div>
<div style="left:22px;top:683px;width:1609px;height:1px;background:rgba(212,212,212,0.800)"></div>
<div style="left:22px;top:684px;width:1609px;height:1px;background:rgba(212,212,212,0.200)"></div>
<div style="left:22px;top:739px;width:1609px;height:1px;background:rgba(212,212,212,0.900)"></div>
<div style="left:22px;top:740px;width:1609px;height:1px;background:rgba(212,212,212,0.100)"></div>
<div style="left:22px;top:795px;width:1609px;height:1px;background:rgba(212,212,212,1.000)"></div>
<div style="left:22px;top:812px;width:1609px;height:1px;background:rgba(212,212,212,0.800)"></div>
<div style="left:22px;top:813px;width:1609px;height:1px;background:rgba(212,212,212,0.200)"></div>
<div style="left:22px;top:829px;width:1609px;height:1px;background:rgba(212,212,212,0.600)"></div>
<div style="left:22px;top:830px;width:1609px;height:1px;background:rgba(212,212,212,0.400)"></div>
<div style="left:197px;top:187px;width:1px;height:609px;background:rgba(0,0,0,0.161)"></div>
<div style="left:198px;top:187px;width:1px;height:609px;background:rgba(0,0,0,0.920)"></div>
<div style="left:199px;top:187px;width:1px;height:609px;background:rgba(0,0,0,0.161)"></div>
<div style="left:294px;top:187px;width:1px;height:609px;background:rgba(0,0,0,0.097)"></div>
<div style="left:295px;top:187px;width:1px;height:609px;background:rgba(0,0,0,0.920)"></div>
<div style="left:296px;top:187px;width:1px;height:609px;background:rgba(0,0,0,0.225)"></div>
<div style="left:391px;top:187px;width:1px;height:609px;background:rgba(0,0,0,0.032)"></div>
<div style="left:392px;top:187px;width:1px;height:609px;background:rgba(0,0,0,0.920)"></div>
<div style="left:393px;top:187px;width:1px;height:609px;background:rgba(0,0,0,0.290)"></div>
<div style="left:489px;top:187px;width:1px;height:609px;background:rgba(0,0,0,0.888)"></div>
<div style="left:490px;top:187px;width:1px;height:609px;background:rgba(0,0,0,0.354)"></div>
<div style="left:586px;top:187px;width:1px;height:609px;background:rgba(0,0,0,0.823)"></div>
<div style="left:587px;top:187px;width:1px;height:609px;background:rgba(0,0,0,0.419)"></div>
<div style="left:683px;top:187px;width:1px;height:609px;background:rgba(0,0,0,0.759)"></div>
<div style="left:684px;top:187px;width:1px;height:609px;background:rgba(0,0,0,0.483)"></div>
<div style="left:780px;top:187px;width:1px;height:609px;background:rgba(0,0,0,0.695)"></div>
<div style="left:781px;top:187px;width:1px;height:609px;background:rgba(0,0,0,0.547)"></div>
<div style="left:877px;top:187px;width:1px;height:609px;background:rgba(0,0,0,0.630)"></div>
<div style="left:878px;top:187px;width:1px;height:609px;background:rgba(0,0,0,0.612)"></div>
<div style="left:974px;top:187px;width:1px;height:609px;background:rgba(0,0,0,0.566)"></div>
<div style="left:975px;top:187px;width:1px;height:609px;background:rgba(0,0,0,0.676)"></div>
<div style="left:1071px;top:187px;width:1px;height:609px;background:rgba(0,0,0,0.501)"></div>
<div style="left:1072px;top:187px;width:1px;height:609px;background:rgba(0,0,0,0.741)"></div>
<div style="left:1168px;top:187px;width:1px;height:609px;background:rgba(0,0,0,0.437)"></div>
<div style="left:1169px;top:187px;width:1px;height:609px;background:rgba(0,0,0,0.805)"></div>
<div style="left:1265px;top:187px;width:1px;height:609px;background:rgba(0,0,0,0.373)"></div>
<div style="left:1266px;top:187px;width:1px;height:609px;background:rgba(0,0,0,0.869)"></div>
<div style="left:1362px;top:187px;width:1px;height:609px;background:rgba(0,0,0,0.308)"></div>
<div style="left:1363px;top:187px;width:1px;height:609px;background:rgba(0,0,0,0.920)"></div>
<div style="left:22px;top:235px;width:1342px;height:1px;background:rgba(0,0,0,0.161)"></div>
<div style="left:22px;top:236px;width:1342px;height:1px;background:rgba(0,0,0,0.920)"></div>
<div style="left:22px;top:237px;width:1342px;height:1px;background:rgba(0,0,0,0.161)"></div>
<div style="left:22px;top:291px;width:1342px;height:1px;background:rgba(0,0,0,0.253)"></div>
<div style="left:22px;top:292px;width:1342px;height:1px;background:rgba(0,0,0,0.920)"></div>
<div style="left:22px;top:293px;width:1342px;height:1px;background:rgba(0,0,0,0.069)"></div>
<div style="left:22px;top:347px;width:1342px;height:1px;background:rgba(0,0,0,0.345)"></div>
<div style="left:22px;top:348px;width:1342px;height:1px;background:rgba(0,0,0,0.897)"></div>
<div style="left:22px;top:403px;width:1342px;height:1px;background:rgba(0,0,0,0.437)"></div>
<div style="left:22px;top:404px;width:1342px;height:1px;background:rgba(0,0,0,0.805)"></div>
<div style="left:22px;top:459px;width:1342px;height:1px;background:rgba(0,0,0,0.529)"></div>
<div style="left:22px;top:460px;width:1342px;height:1px;background:rgba(0,0,0,0.713)"></div>
<div style="left:22px;top:515px;width:1342px;height:1px;background:rgba(0,0,0,0.621)"></div>
<div style="left:22px;top:516px;width:1342px;height:1px;background:rgba(0,0,0,0.621)"></div>
<div style="left:22px;top:571px;width:1342px;height:1px;background:rgba(0,0,0,0.713)"></div>
<div style="left:22px;top:572px;width:1342px;height:1px;background:rgba(0,0,0,0.529)"></div>
<div style="left:22px;top:627px;width:1342px;height:1px;background:rgba(0,0,0,0.805)"></div>
<div style="left:22px;top:628px;width:1342px;height:1px;background:rgba(0,0,0,0.437)"></div>
<div style="left:22px;top:683px;width:1342px;height:1px;background:rgba(0,0,0,0.897)"></div>
<div style="left:22px;top:684px;width:1342px;height:1px;background:rgba(0,0,0,0.345)"></div>
<div style="left:22px;top:738px;width:1342px;height:1px;background:rgba(0,0,0,0.069)"></div>
<div style="left:22px;top:739px;width:1342px;height:1px;background:rgba(0,0,0,0.920)"></div>
<div style="left:22px;top:740px;width:1342px;height:1px;background:rgba(0,0,0,0.253)"></div>
<div style="left:22px;top:794px;width:1609px;height:1px;background:rgba(0,0,0,0.161)"></div>
<div style="left:22px;top:795px;width:1609px;height:1px;background:rgba(0,0,0,0.920)"></div>
<div style="left:22px;top:796px;width:1609px;height:1px;background:rgba(0,0,0,0.161)"></div>
<div style="left:1631px;top:170px;width:1px;height:675px;background:#7a7a7a"></div>
<svg style="left:8.5px;top:173.5px;" width="11" height="11" viewBox="0 0 11 11"><path d="M10.5 0.2v10.4H0.2z" fill="#b4b4b4"/></svg>
<div style="left:0px;top:236px;width:21px;height:1px;background:rgba(190,190,190,1.000)"></div>
<div style="left:0px;top:291px;width:21px;height:1px;background:rgba(190,190,190,0.100)"></div>
<div style="left:0px;top:292px;width:21px;height:1px;background:rgba(190,190,190,0.900)"></div>
<div style="left:0px;top:347px;width:21px;height:1px;background:rgba(190,190,190,0.200)"></div>
<div style="left:0px;top:348px;width:21px;height:1px;background:rgba(190,190,190,0.800)"></div>
<div style="left:0px;top:403px;width:21px;height:1px;background:rgba(190,190,190,0.300)"></div>
<div style="left:0px;top:404px;width:21px;height:1px;background:rgba(190,190,190,0.700)"></div>
<div style="left:0px;top:459px;width:21px;height:1px;background:rgba(190,190,190,0.400)"></div>
<div style="left:0px;top:460px;width:21px;height:1px;background:rgba(190,190,190,0.600)"></div>
<div style="left:0px;top:515px;width:21px;height:1px;background:rgba(190,190,190,0.500)"></div>
<div style="left:0px;top:516px;width:21px;height:1px;background:rgba(190,190,190,0.500)"></div>
<div style="left:0px;top:571px;width:21px;height:1px;background:rgba(190,190,190,0.600)"></div>
<div style="left:0px;top:572px;width:21px;height:1px;background:rgba(190,190,190,0.400)"></div>
<div style="left:0px;top:627px;width:21px;height:1px;background:rgba(190,190,190,0.700)"></div>
<div style="left:0px;top:628px;width:21px;height:1px;background:rgba(190,190,190,0.300)"></div>
<div style="left:0px;top:683px;width:21px;height:1px;background:rgba(190,190,190,0.800)"></div>
<div style="left:0px;top:684px;width:21px;height:1px;background:rgba(190,190,190,0.200)"></div>
<div style="left:0px;top:739px;width:21px;height:1px;background:rgba(190,190,190,0.900)"></div>
<div style="left:0px;top:740px;width:21px;height:1px;background:rgba(190,190,190,0.100)"></div>
<div style="left:0px;top:795px;width:21px;height:1px;background:rgba(190,190,190,1.000)"></div>
<div style="left:0px;top:812px;width:21px;height:1px;background:rgba(190,190,190,0.800)"></div>
<div style="left:0px;top:813px;width:21px;height:1px;background:rgba(190,190,190,0.200)"></div>
<div style="left:0px;top:829px;width:21px;height:1px;background:rgba(190,190,190,0.600)"></div>
<div style="left:0px;top:830px;width:21px;height:1px;background:rgba(190,190,190,0.400)"></div>
<div style="left:489.5px;top:170px;width:97px;height:16px;background:#d2d2d2"></div>
<div style="left:489.5px;top:185px;width:97px;height:2px;background:#217346"></div>
<div style="left:197px;top:171px;width:1px;height:15px;background:rgba(190,190,190,0.400)"></div>
<div style="left:198px;top:171px;width:1px;height:15px;background:rgba(190,190,190,0.600)"></div>
<div style="left:294px;top:171px;width:1px;height:15px;background:rgba(190,190,190,0.330)"></div>
<div style="left:295px;top:171px;width:1px;height:15px;background:rgba(190,190,190,0.670)"></div>
<div style="left:391px;top:171px;width:1px;height:15px;background:rgba(190,190,190,0.260)"></div>
<div style="left:392px;top:171px;width:1px;height:15px;background:rgba(190,190,190,0.740)"></div>
<div style="left:488px;top:171px;width:1px;height:15px;background:rgba(190,190,190,0.190)"></div>
<div style="left:489px;top:171px;width:1px;height:15px;background:rgba(190,190,190,0.810)"></div>
<div style="left:585px;top:171px;width:1px;height:15px;background:rgba(190,190,190,0.120)"></div>
<div style="left:586px;top:171px;width:1px;height:15px;background:rgba(190,190,190,0.880)"></div>
<div style="left:682px;top:171px;width:1px;height:15px;background:rgba(190,190,190,0.050)"></div>
<div style="left:683px;top:171px;width:1px;height:15px;background:rgba(190,190,190,0.950)"></div>
<div style="left:780px;top:171px;width:1px;height:15px;background:rgba(190,190,190,0.980)"></div>
<div style="left:877px;top:171px;width:1px;height:15px;background:rgba(190,190,190,0.910)"></div>
<div style="left:878px;top:171px;width:1px;height:15px;background:rgba(190,190,190,0.090)"></div>
<div style="left:974px;top:171px;width:1px;height:15px;background:rgba(190,190,190,0.840)"></div>
<div style="left:975px;top:171px;width:1px;height:15px;background:rgba(190,190,190,0.160)"></div>
<div style="left:1071px;top:171px;width:1px;height:15px;background:rgba(190,190,190,0.770)"></div>
<div style="left:1072px;top:171px;width:1px;height:15px;background:rgba(190,190,190,0.230)"></div>
<div style="left:1168px;top:171px;width:1px;height:15px;background:rgba(190,190,190,0.700)"></div>
<div style="left:1169px;top:171px;width:1px;height:15px;background:rgba(190,190,190,0.300)"></div>
<div style="left:1265px;top:171px;width:1px;height:15px;background:rgba(190,190,190,0.630)"></div>
<div style="left:1266px;top:171px;width:1px;height:15px;background:rgba(190,190,190,0.370)"></div>
<div style="left:1362px;top:171px;width:1px;height:15px;background:rgba(190,190,190,0.560)"></div>
<div style="left:1363px;top:171px;width:1px;height:15px;background:rgba(190,190,190,0.440)"></div>
<div style="left:1459px;top:171px;width:1px;height:15px;background:rgba(190,190,190,0.490)"></div>
<div style="left:1460px;top:171px;width:1px;height:15px;background:rgba(190,190,190,0.510)"></div>
<div style="left:1556px;top:171px;width:1px;height:15px;background:rgba(190,190,190,0.420)"></div>
<div style="left:1557px;top:171px;width:1px;height:15px;background:rgba(190,190,190,0.580)"></div>
<div style="left:1608px;top:171px;width:1px;height:15px;background:rgba(190,190,190,0.100)"></div>
<div style="left:1609px;top:171px;width:1px;height:15px;background:rgba(190,190,190,0.900)"></div>
<div class="t" style="left:110.0px;top:173.11px;font-size:10.5px;color:#333;transform:translateX(-50%);">A</div>
<div class="t" style="left:247.0px;top:173.11px;font-size:10.5px;color:#333;transform:translateX(-50%);">B</div>
<div class="t" style="left:344.5px;top:173.11px;font-size:10.5px;color:#333;transform:translateX(-50%);">C</div>
<div class="t" style="left:441.5px;top:173.11px;font-size:10.5px;color:#333;transform:translateX(-50%);">D</div>
<div class="t" style="left:538.5px;top:173.11px;font-size:10.5px;color:#1e6b3c;transform:translateX(-50%);">E</div>
<div class="t" style="left:635.5px;top:173.11px;font-size:10.5px;color:#333;transform:translateX(-50%);">F</div>
<div class="t" style="left:732.5px;top:173.11px;font-size:10.5px;color:#333;transform:translateX(-50%);">G</div>
<div class="t" style="left:829.5px;top:173.11px;font-size:10.5px;color:#333;transform:translateX(-50%);">H</div>
<div class="t" style="left:926.5px;top:173.11px;font-size:10.5px;color:#333;transform:translateX(-50%);">I</div>
<div class="t" style="left:1023.5px;top:173.11px;font-size:10.5px;color:#333;transform:translateX(-50%);">J</div>
<div class="t" style="left:1120.5px;top:173.11px;font-size:10.5px;color:#333;transform:translateX(-50%);">K</div>
<div class="t" style="left:1217.5px;top:173.11px;font-size:10.5px;color:#333;transform:translateX(-50%);">L</div>
<div class="t" style="left:1314.5px;top:173.11px;font-size:10.5px;color:#333;transform:translateX(-50%);">M</div>
<div class="t" style="left:1411.5px;top:173.11px;font-size:10.5px;color:#333;transform:translateX(-50%);">N</div>
<div class="t" style="left:1508.5px;top:173.11px;font-size:10.5px;color:#333;transform:translateX(-50%);">O</div>
<div class="t" style="left:1583.5px;top:173.11px;font-size:10.5px;color:#333;transform:translateX(-50%);">P</div>
<div class="t" style="left:11px;top:223.61px;font-size:10.5px;color:#333;transform:translateX(-50%);">1</div>
<div class="t" style="left:11px;top:279.61px;font-size:10.5px;color:#333;transform:translateX(-50%);">2</div>
<div class="t" style="left:11px;top:335.61px;font-size:10.5px;color:#333;transform:translateX(-50%);">3</div>
<div class="t" style="left:11px;top:391.61px;font-size:10.5px;color:#333;transform:translateX(-50%);">4</div>
<div class="t" style="left:11px;top:447.61px;font-size:10.5px;color:#333;transform:translateX(-50%);">5</div>
<div class="t" style="left:11px;top:503.61px;font-size:10.5px;color:#333;transform:translateX(-50%);">6</div>
<div class="t" style="left:11px;top:559.61px;font-size:10.5px;color:#333;transform:translateX(-50%);">7</div>
<div class="t" style="left:11px;top:615.61px;font-size:10.5px;color:#333;transform:translateX(-50%);">8</div>
<div class="t" style="left:11px;top:671.61px;font-size:10.5px;color:#333;transform:translateX(-50%);">9</div>
<div class="t" style="left:11px;top:727.61px;font-size:10.5px;color:#333;transform:translateX(-50%);">10</div>
<div class="t" style="left:11px;top:782.61px;font-size:10.5px;color:#333;transform:translateX(-50%);">11</div>
<div class="t" style="left:11px;top:799.61px;font-size:10.5px;color:#333;transform:translateX(-50%);">12</div>
<div class="t" style="left:11px;top:816.61px;font-size:10.5px;color:#333;transform:translateX(-50%);">13</div>
<div class="t" style="left:11px;top:831.61px;font-size:10.5px;color:#333;transform:translateX(-50%);">14</div>
<div class="t" style="left:110px;top:206.69px;font-size:11px;color:#000;transform:translateX(-50%);letter-spacing:0.42px;-webkit-text-stroke:0.05px #000">Salesperson:</div>
<div class="t" style="left:200px;top:223.19px;font-size:11px;color:#000;letter-spacing:0.1px;-webkit-text-stroke:0.05px #000">January</div>
<div class="t" style="left:344.5px;top:206.69px;font-size:11px;color:#000;transform:translateX(-50%);letter-spacing:0.42px;-webkit-text-stroke:0.05px #000">February</div>
<div class="t" style="left:441.5px;top:206.69px;font-size:11px;color:#000;transform:translateX(-50%);letter-spacing:0.42px;-webkit-text-stroke:0.05px #000">March</div>
<div class="t" style="left:538.5px;top:206.69px;font-size:11px;color:#000;transform:translateX(-50%);letter-spacing:0.42px;-webkit-text-stroke:0.05px #000">April</div>
<div class="t" style="left:635.5px;top:206.69px;font-size:11px;color:#000;transform:translateX(-50%);letter-spacing:0.42px;-webkit-text-stroke:0.05px #000">May</div>
<div class="t" style="left:732.5px;top:206.69px;font-size:11px;color:#000;transform:translateX(-50%);letter-spacing:0.42px;-webkit-text-stroke:0.05px #000">June</div>
<div class="t" style="left:829.5px;top:206.69px;font-size:11px;color:#000;transform:translateX(-50%);letter-spacing:0.42px;-webkit-text-stroke:0.05px #000">July</div>
<div class="t" style="left:926.5px;top:206.69px;font-size:11px;color:#000;transform:translateX(-50%);letter-spacing:0.42px;-webkit-text-stroke:0.05px #000">August</div>
<div class="t" style="left:1023.5px;top:206.69px;font-size:11px;color:#000;transform:translateX(-50%);letter-spacing:0.42px;-webkit-text-stroke:0.05px #000">September</div>
<div class="t" style="left:1120.5px;top:206.69px;font-size:11px;color:#000;transform:translateX(-50%);letter-spacing:0.42px;-webkit-text-stroke:0.05px #000">October</div>
<div class="t" style="left:1217.5px;top:206.69px;font-size:11px;color:#000;transform:translateX(-50%);letter-spacing:0.42px;-webkit-text-stroke:0.05px #000">November</div>
<div class="t" style="left:1314.5px;top:206.69px;font-size:11px;color:#000;transform:translateX(-50%);letter-spacing:0.42px;-webkit-text-stroke:0.05px #000">December</div>
<div class="t" style="left:24px;top:259.64px;font-size:11px;color:#000;letter-spacing:0.42px;-webkit-text-stroke:0.05px #000">Nova Lane</div>
<svg style="left:190px;top:256.45px;" width="32" height="16" viewBox="0 0 32 16"><path d="M9.20 5.65 L16.30 5.65 L13.00 1.85 L17.60 1.85 L22.90 7.55 L17.60 13.35 L13.00 13.35 L16.30 9.35 L9.20 9.35z" fill="#f2c47f" stroke="#c8922e" stroke-width="0.8" stroke-linejoin="round"/></svg>
<div class="t" style="left:246.535px;top:259.64px;font-size:11px;color:#000;transform:translateX(-50%);;-webkit-text-stroke:0.05px #000">1209</div>
<svg style="left:288px;top:256.45px;" width="32" height="16" viewBox="0 0 32 16"><path d="M13.90 1.20 L17.80 1.20 L17.80 8.00 L21.50 4.70 L21.50 10.10 L15.70 14.50 L10.10 10.10 L10.10 4.70 L13.90 8.00z" fill="#e05a35" stroke="#c13c1c" stroke-width="0.8" stroke-linejoin="round"/></svg>
<div class="t" style="left:343.605px;top:259.64px;font-size:11px;color:#000;transform:translateX(-50%);;-webkit-text-stroke:0.05px #000">469</div>
<svg style="left:385px;top:256.45px;" width="32" height="16" viewBox="0 0 32 16"><path d="M9.20 5.65 L16.30 5.65 L13.00 1.85 L17.60 1.85 L22.90 7.55 L17.60 13.35 L13.00 13.35 L16.30 9.35 L9.20 9.35z" fill="#f2c47f" stroke="#c8922e" stroke-width="0.8" stroke-linejoin="round"/></svg>
<div class="t" style="left:440.67499999999995px;top:259.64px;font-size:11px;color:#000;transform:translateX(-50%);;-webkit-text-stroke:0.05px #000">1350</div>
<svg style="left:482px;top:256.45px;" width="32" height="16" viewBox="0 0 32 16"><path d="M13.90 1.20 L17.80 1.20 L17.80 8.00 L21.50 4.70 L21.50 10.10 L15.70 14.50 L10.10 10.10 L10.10 4.70 L13.90 8.00z" fill="#e05a35" stroke="#c13c1c" stroke-width="0.8" stroke-linejoin="round"/></svg>
<div class="t" style="left:537.745px;top:259.64px;font-size:11px;color:#000;transform:translateX(-50%);;-webkit-text-stroke:0.05px #000">894</div>
<svg style="left:579px;top:256.45px;" width="32" height="16" viewBox="0 0 32 16"><path d="M13.90 1.20 L17.80 1.20 L17.80 8.00 L21.50 4.70 L21.50 10.10 L15.70 14.50 L10.10 10.10 L10.10 4.70 L13.90 8.00z" fill="#e05a35" stroke="#c13c1c" stroke-width="0.8" stroke-linejoin="round"/></svg>
<div class="t" style="left:634.8149999999999px;top:259.64px;font-size:11px;color:#000;transform:translateX(-50%);;-webkit-text-stroke:0.05px #000">1002</div>
<svg style="left:676px;top:256.45px;" width="32" height="16" viewBox="0 0 32 16"><path d="M13.90 1.20 L17.80 1.20 L17.80 8.00 L21.50 4.70 L21.50 10.10 L15.70 14.50 L10.10 10.10 L10.10 4.70 L13.90 8.00z" fill="#e05a35" stroke="#c13c1c" stroke-width="0.8" stroke-linejoin="round"/></svg>
<div class="t" style="left:731.885px;top:259.64px;font-size:11px;color:#000;transform:translateX(-50%);;-webkit-text-stroke:0.05px #000">754</div>
<div class="t" style="left:24px;top:315.54px;font-size:11px;color:#000;letter-spacing:0.42px;-webkit-text-stroke:0.05px #000">Orion Vega</div>
<svg style="left:190px;top:312.34999999999997px;" width="32" height="16" viewBox="0 0 32 16"><path d="M13.90 1.20 L17.80 1.20 L17.80 8.00 L21.50 4.70 L21.50 10.10 L15.70 14.50 L10.10 10.10 L10.10 4.70 L13.90 8.00z" fill="#e05a35" stroke="#c13c1c" stroke-width="0.8" stroke-linejoin="round"/></svg>
<div class="t" style="left:246.535px;top:315.54px;font-size:11px;color:#000;transform:translateX(-50%);;-webkit-text-stroke:0.05px #000">798</div>
<svg style="left:288px;top:312.34999999999997px;" width="32" height="16" viewBox="0 0 32 16"><path d="M13.90 1.20 L17.80 1.20 L17.80 8.00 L21.50 4.70 L21.50 10.10 L15.70 14.50 L10.10 10.10 L10.10 4.70 L13.90 8.00z" fill="#e05a35" stroke="#c13c1c" stroke-width="0.8" stroke-linejoin="round"/></svg>
<div class="t" style="left:343.605px;top:315.54px;font-size:11px;color:#000;transform:translateX(-50%);;-webkit-text-stroke:0.05px #000">498</div>
<svg style="left:385px;top:312.34999999999997px;" width="32" height="16" viewBox="0 0 32 16"><path d="M13.90 1.20 L17.80 1.20 L17.80 8.00 L21.50 4.70 L21.50 10.10 L15.70 14.50 L10.10 10.10 L10.10 4.70 L13.90 8.00z" fill="#e05a35" stroke="#c13c1c" stroke-width="0.8" stroke-linejoin="round"/></svg>
<div class="t" style="left:440.67499999999995px;top:315.54px;font-size:11px;color:#000;transform:translateX(-50%);;-webkit-text-stroke:0.05px #000">728</div>
<svg style="left:482px;top:312.34999999999997px;" width="32" height="16" viewBox="0 0 32 16"><path d="M9.20 5.65 L16.30 5.65 L13.00 1.85 L17.60 1.85 L22.90 7.55 L17.60 13.35 L13.00 13.35 L16.30 9.35 L9.20 9.35z" fill="#f2c47f" stroke="#c8922e" stroke-width="0.8" stroke-linejoin="round"/></svg>
<div class="t" style="left:537.745px;top:315.54px;font-size:11px;color:#000;transform:translateX(-50%);;-webkit-text-stroke:0.05px #000">1243</div>
<svg style="left:579px;top:312.34999999999997px;" width="32" height="16" viewBox="0 0 32 16"><path d="M9.20 5.65 L16.30 5.65 L13.00 1.85 L17.60 1.85 L22.90 7.55 L17.60 13.35 L13.00 13.35 L16.30 9.35 L9.20 9.35z" fill="#f2c47f" stroke="#c8922e" stroke-width="0.8" stroke-linejoin="round"/></svg>
<div class="t" style="left:634.8149999999999px;top:315.54px;font-size:11px;color:#000;transform:translateX(-50%);;-webkit-text-stroke:0.05px #000">1490</div>
<svg style="left:676px;top:312.34999999999997px;" width="32" height="16" viewBox="0 0 32 16"><path d="M13.90 1.20 L17.80 1.20 L17.80 8.00 L21.50 4.70 L21.50 10.10 L15.70 14.50 L10.10 10.10 L10.10 4.70 L13.90 8.00z" fill="#e05a35" stroke="#c13c1c" stroke-width="0.8" stroke-linejoin="round"/></svg>
<div class="t" style="left:731.885px;top:315.54px;font-size:11px;color:#000;transform:translateX(-50%);;-webkit-text-stroke:0.05px #000">923</div>
<div class="t" style="left:24px;top:371.44px;font-size:11px;color:#000;letter-spacing:0.42px;-webkit-text-stroke:0.05px #000">Luna Carter</div>
<svg style="left:190px;top:368.25px;" width="32" height="16" viewBox="0 0 32 16"><path d="M13.90 1.20 L17.80 1.20 L17.80 8.00 L21.50 4.70 L21.50 10.10 L15.70 14.50 L10.10 10.10 L10.10 4.70 L13.90 8.00z" fill="#e05a35" stroke="#c13c1c" stroke-width="0.8" stroke-linejoin="round"/></svg>
<div class="t" style="left:246.535px;top:371.44px;font-size:11px;color:#000;transform:translateX(-50%);;-webkit-text-stroke:0.05px #000">864</div>
<svg style="left:288px;top:368.25px;" width="32" height="16" viewBox="0 0 32 16"><path d="M13.90 1.20 L17.80 1.20 L17.80 8.00 L21.50 4.70 L21.50 10.10 L15.70 14.50 L10.10 10.10 L10.10 4.70 L13.90 8.00z" fill="#e05a35" stroke="#c13c1c" stroke-width="0.8" stroke-linejoin="round"/></svg>
<div class="t" style="left:343.605px;top:371.44px;font-size:11px;color:#000;transform:translateX(-50%);;-webkit-text-stroke:0.05px #000">761</div>
<svg style="left:385px;top:368.25px;" width="32" height="16" viewBox="0 0 32 16"><path d="M13.90 1.20 L17.80 1.20 L17.80 8.00 L21.50 4.70 L21.50 10.10 L15.70 14.50 L10.10 10.10 L10.10 4.70 L13.90 8.00z" fill="#e05a35" stroke="#c13c1c" stroke-width="0.8" stroke-linejoin="round"/></svg>
<div class="t" style="left:440.67499999999995px;top:371.44px;font-size:11px;color:#000;transform:translateX(-50%);;-webkit-text-stroke:0.05px #000">763</div>
<svg style="left:482px;top:368.25px;" width="32" height="16" viewBox="0 0 32 16"><path d="M9.20 5.65 L16.30 5.65 L13.00 1.85 L17.60 1.85 L22.90 7.55 L17.60 13.35 L13.00 13.35 L16.30 9.35 L9.20 9.35z" fill="#f2c47f" stroke="#c8922e" stroke-width="0.8" stroke-linejoin="round"/></svg>
<div class="t" style="left:537.745px;top:371.44px;font-size:11px;color:#000;transform:translateX(-50%);;-webkit-text-stroke:0.05px #000">1098</div>
<svg style="left:579px;top:368.25px;" width="32" height="16" viewBox="0 0 32 16"><path d="M13.90 1.20 L17.80 1.20 L17.80 8.00 L21.50 4.70 L21.50 10.10 L15.70 14.50 L10.10 10.10 L10.10 4.70 L13.90 8.00z" fill="#e05a35" stroke="#c13c1c" stroke-width="0.8" stroke-linejoin="round"/></svg>
<div class="t" style="left:634.8149999999999px;top:371.44px;font-size:11px;color:#000;transform:translateX(-50%);;-webkit-text-stroke:0.05px #000">623</div>
<svg style="left:676px;top:368.25px;" width="32" height="16" viewBox="0 0 32 16"><path d="M13.90 1.20 L17.80 1.20 L17.80 8.00 L21.50 4.70 L21.50 10.10 L15.70 14.50 L10.10 10.10 L10.10 4.70 L13.90 8.00z" fill="#e05a35" stroke="#c13c1c" stroke-width="0.8" stroke-linejoin="round"/></svg>
<div class="t" style="left:731.885px;top:371.44px;font-size:11px;color:#000;transform:translateX(-50%);;-webkit-text-stroke:0.05px #000">974</div>
<div class="t" style="left:24px;top:427.34px;font-size:11px;color:#000;letter-spacing:0.42px;-webkit-text-stroke:0.05px #000">Felix Hart</div>
<svg style="left:190px;top:424.15px;" width="32" height="16" viewBox="0 0 32 16"><path d="M13.90 1.20 L17.80 1.20 L17.80 8.00 L21.50 4.70 L21.50 10.10 L15.70 14.50 L10.10 10.10 L10.10 4.70 L13.90 8.00z" fill="#e05a35" stroke="#c13c1c" stroke-width="0.8" stroke-linejoin="round"/></svg>
<div class="t" style="left:246.535px;top:427.34px;font-size:11px;color:#000;transform:translateX(-50%);;-webkit-text-stroke:0.05px #000">920</div>
<svg style="left:288px;top:424.15px;" width="32" height="16" viewBox="0 0 32 16"><path d="M13.90 1.20 L17.80 1.20 L17.80 8.00 L21.50 4.70 L21.50 10.10 L15.70 14.50 L10.10 10.10 L10.10 4.70 L13.90 8.00z" fill="#e05a35" stroke="#c13c1c" stroke-width="0.8" stroke-linejoin="round"/></svg>
<div class="t" style="left:343.605px;top:427.34px;font-size:11px;color:#000;transform:translateX(-50%);;-webkit-text-stroke:0.05px #000">650</div>
<svg style="left:385px;top:424.15px;" width="32" height="16" viewBox="0 0 32 16"><path d="M13.90 1.20 L17.80 1.20 L17.80 8.00 L21.50 4.70 L21.50 10.10 L15.70 14.50 L10.10 10.10 L10.10 4.70 L13.90 8.00z" fill="#e05a35" stroke="#c13c1c" stroke-width="0.8" stroke-linejoin="round"/></svg>
<div class="t" style="left:440.67499999999995px;top:427.34px;font-size:11px;color:#000;transform:translateX(-50%);;-webkit-text-stroke:0.05px #000">390</div>
<svg style="left:482px;top:424.15px;" width="32" height="16" viewBox="0 0 32 16"><path d="M9.20 5.65 L16.30 5.65 L13.00 1.85 L17.60 1.85 L22.90 7.55 L17.60 13.35 L13.00 13.35 L16.30 9.35 L9.20 9.35z" fill="#f2c47f" stroke="#c8922e" stroke-width="0.8" stroke-linejoin="round"/></svg>
<div class="t" style="left:537.745px;top:427.34px;font-size:11px;color:#000;transform:translateX(-50%);;-webkit-text-stroke:0.05px #000">1407</div>
<svg style="left:579px;top:424.15px;" width="32" height="16" viewBox="0 0 32 16"><path d="M13.90 1.20 L17.80 1.20 L17.80 8.00 L21.50 4.70 L21.50 10.10 L15.70 14.50 L10.10 10.10 L10.10 4.70 L13.90 8.00z" fill="#e05a35" stroke="#c13c1c" stroke-width="0.8" stroke-linejoin="round"/></svg>
<div class="t" style="left:634.8149999999999px;top:427.34px;font-size:11px;color:#000;transform:translateX(-50%);;-webkit-text-stroke:0.05px #000">869</div>
<svg style="left:676px;top:424.15px;" width="32" height="16" viewBox="0 0 32 16"><path d="M15.70 0.95 L21.40 6.35 L21.40 10.75 L17.80 8.75 L17.80 14.80 L13.80 14.80 L13.80 8.75 L10.10 10.75 L10.10 6.35z" fill="#5fa88a" stroke="#2e7a58" stroke-width="0.8" stroke-linejoin="round"/></svg>
<div class="t" style="left:731.885px;top:427.34px;font-size:11px;color:#000;transform:translateX(-50%);;-webkit-text-stroke:0.05px #000">1854</div>
<div class="t" style="left:24px;top:483.24px;font-size:11px;color:#000;letter-spacing:0.42px;-webkit-text-stroke:0.05px #000">Aurora Bennett</div>
<svg style="left:190px;top:480.05px;" width="32" height="16" viewBox="0 0 32 16"><path d="M9.20 5.65 L16.30 5.65 L13.00 1.85 L17.60 1.85 L22.90 7.55 L17.60 13.35 L13.00 13.35 L16.30 9.35 L9.20 9.35z" fill="#f2c47f" stroke="#c8922e" stroke-width="0.8" stroke-linejoin="round"/></svg>
<div class="t" style="left:246.535px;top:483.24px;font-size:11px;color:#000;transform:translateX(-50%);;-webkit-text-stroke:0.05px #000">1090</div>
<svg style="left:288px;top:480.05px;" width="32" height="16" viewBox="0 0 32 16"><path d="M13.90 1.20 L17.80 1.20 L17.80 8.00 L21.50 4.70 L21.50 10.10 L15.70 14.50 L10.10 10.10 L10.10 4.70 L13.90 8.00z" fill="#e05a35" stroke="#c13c1c" stroke-width="0.8" stroke-linejoin="round"/></svg>
<div class="t" style="left:343.605px;top:483.24px;font-size:11px;color:#000;transform:translateX(-50%);;-webkit-text-stroke:0.05px #000">844</div>
<svg style="left:385px;top:480.05px;" width="32" height="16" viewBox="0 0 32 16"><path d="M13.90 1.20 L17.80 1.20 L17.80 8.00 L21.50 4.70 L21.50 10.10 L15.70 14.50 L10.10 10.10 L10.10 4.70 L13.90 8.00z" fill="#e05a35" stroke="#c13c1c" stroke-width="0.8" stroke-linejoin="round"/></svg>
<div class="t" style="left:440.67499999999995px;top:483.24px;font-size:11px;color:#000;transform:translateX(-50%);;-webkit-text-stroke:0.05px #000">578</div>
<svg style="left:482px;top:480.05px;" width="32" height="16" viewBox="0 0 32 16"><path d="M13.90 1.20 L17.80 1.20 L17.80 8.00 L21.50 4.70 L21.50 10.10 L15.70 14.50 L10.10 10.10 L10.10 4.70 L13.90 8.00z" fill="#e05a35" stroke="#c13c1c" stroke-width="0.8" stroke-linejoin="round"/></svg>
<div class="t" style="left:537.745px;top:483.24px;font-size:11px;color:#000;transform:translateX(-50%);;-webkit-text-stroke:0.05px #000">469</div>
<svg style="left:579px;top:480.05px;" width="32" height="16" viewBox="0 0 32 16"><path d="M13.90 1.20 L17.80 1.20 L17.80 8.00 L21.50 4.70 L21.50 10.10 L15.70 14.50 L10.10 10.10 L10.10 4.70 L13.90 8.00z" fill="#e05a35" stroke="#c13c1c" stroke-width="0.8" stroke-linejoin="round"/></svg>
<div class="t" style="left:634.8149999999999px;top:483.24px;font-size:11px;color:#000;transform:translateX(-50%);;-webkit-text-stroke:0.05px #000">986</div>
<svg style="left:676px;top:480.05px;" width="32" height="16" viewBox="0 0 32 16"><path d="M13.90 1.20 L17.80 1.20 L17.80 8.00 L21.50 4.70 L21.50 10.10 L15.70 14.50 L10.10 10.10 L10.10 4.70 L13.90 8.00z" fill="#e05a35" stroke="#c13c1c" stroke-width="0.8" stroke-linejoin="round"/></svg>
<div class="t" style="left:731.885px;top:483.24px;font-size:11px;color:#000;transform:translateX(-50%);;-webkit-text-stroke:0.05px #000">893</div>
<div class="t" style="left:24px;top:539.14px;font-size:11px;color:#000;letter-spacing:0.42px;-webkit-text-stroke:0.05px #000">Jasper Cole</div>
<svg style="left:190px;top:535.95px;" width="32" height="16" viewBox="0 0 32 16"><path d="M15.70 0.95 L21.40 6.35 L21.40 10.75 L17.80 8.75 L17.80 14.80 L13.80 14.80 L13.80 8.75 L10.10 10.75 L10.10 6.35z" fill="#5fa88a" stroke="#2e7a58" stroke-width="0.8" stroke-linejoin="round"/></svg>
<div class="t" style="left:246.535px;top:539.14px;font-size:11px;color:#000;transform:translateX(-50%);;-webkit-text-stroke:0.05px #000">2500</div>
<svg style="left:288px;top:535.95px;" width="32" height="16" viewBox="0 0 32 16"><path d="M13.90 1.20 L17.80 1.20 L17.80 8.00 L21.50 4.70 L21.50 10.10 L15.70 14.50 L10.10 10.10 L10.10 4.70 L13.90 8.00z" fill="#e05a35" stroke="#c13c1c" stroke-width="0.8" stroke-linejoin="round"/></svg>
<div class="t" style="left:343.605px;top:539.14px;font-size:11px;color:#000;transform:translateX(-50%);;-webkit-text-stroke:0.05px #000">435</div>
<svg style="left:385px;top:535.95px;" width="32" height="16" viewBox="0 0 32 16"><path d="M13.90 1.20 L17.80 1.20 L17.80 8.00 L21.50 4.70 L21.50 10.10 L15.70 14.50 L10.10 10.10 L10.10 4.70 L13.90 8.00z" fill="#e05a35" stroke="#c13c1c" stroke-width="0.8" stroke-linejoin="round"/></svg>
<div class="t" style="left:440.67499999999995px;top:539.14px;font-size:11px;color:#000;transform:translateX(-50%);;-webkit-text-stroke:0.05px #000">863</div>
<svg style="left:482px;top:535.95px;" width="32" height="16" viewBox="0 0 32 16"><path d="M13.90 1.20 L17.80 1.20 L17.80 8.00 L21.50 4.70 L21.50 10.10 L15.70 14.50 L10.10 10.10 L10.10 4.70 L13.90 8.00z" fill="#e05a35" stroke="#c13c1c" stroke-width="0.8" stroke-linejoin="round"/></svg>
<div class="t" style="left:537.745px;top:539.14px;font-size:11px;color:#000;transform:translateX(-50%);;-webkit-text-stroke:0.05px #000">847</div>
<svg style="left:579px;top:535.95px;" width="32" height="16" viewBox="0 0 32 16"><path d="M13.90 1.20 L17.80 1.20 L17.80 8.00 L21.50 4.70 L21.50 10.10 L15.70 14.50 L10.10 10.10 L10.10 4.70 L13.90 8.00z" fill="#e05a35" stroke="#c13c1c" stroke-width="0.8" stroke-linejoin="round"/></svg>
<div class="t" style="left:634.8149999999999px;top:539.14px;font-size:11px;color:#000;transform:translateX(-50%);;-webkit-text-stroke:0.05px #000">514</div>
<svg style="left:676px;top:535.95px;" width="32" height="16" viewBox="0 0 32 16"><path d="M13.90 1.20 L17.80 1.20 L17.80 8.00 L21.50 4.70 L21.50 10.10 L15.70 14.50 L10.10 10.10 L10.10 4.70 L13.90 8.00z" fill="#e05a35" stroke="#c13c1c" stroke-width="0.8" stroke-linejoin="round"/></svg>
<div class="t" style="left:731.885px;top:539.14px;font-size:11px;color:#000;transform:translateX(-50%);;-webkit-text-stroke:0.05px #000">1025</div>
<div class="t" style="left:24px;top:595.04px;font-size:11px;color:#000;letter-spacing:0.42px;-webkit-text-stroke:0.05px #000">Ivy Monroe</div>
<svg style="left:190px;top:591.85px;" width="32" height="16" viewBox="0 0 32 16"><path d="M13.90 1.20 L17.80 1.20 L17.80 8.00 L21.50 4.70 L21.50 10.10 L15.70 14.50 L10.10 10.10 L10.10 4.70 L13.90 8.00z" fill="#e05a35" stroke="#c13c1c" stroke-width="0.8" stroke-linejoin="round"/></svg>
<div class="t" style="left:246.535px;top:595.04px;font-size:11px;color:#000;transform:translateX(-50%);;-webkit-text-stroke:0.05px #000">689</div>
<svg style="left:288px;top:591.85px;" width="32" height="16" viewBox="0 0 32 16"><path d="M13.90 1.20 L17.80 1.20 L17.80 8.00 L21.50 4.70 L21.50 10.10 L15.70 14.50 L10.10 10.10 L10.10 4.70 L13.90 8.00z" fill="#e05a35" stroke="#c13c1c" stroke-width="0.8" stroke-linejoin="round"/></svg>
<div class="t" style="left:343.605px;top:595.04px;font-size:11px;color:#000;transform:translateX(-50%);;-webkit-text-stroke:0.05px #000">1059</div>
<svg style="left:385px;top:591.85px;" width="32" height="16" viewBox="0 0 32 16"><path d="M13.90 1.20 L17.80 1.20 L17.80 8.00 L21.50 4.70 L21.50 10.10 L15.70 14.50 L10.10 10.10 L10.10 4.70 L13.90 8.00z" fill="#e05a35" stroke="#c13c1c" stroke-width="0.8" stroke-linejoin="round"/></svg>
<div class="t" style="left:440.67499999999995px;top:595.04px;font-size:11px;color:#000;transform:translateX(-50%);;-webkit-text-stroke:0.05px #000">934</div>
<svg style="left:482px;top:591.85px;" width="32" height="16" viewBox="0 0 32 16"><path d="M9.20 5.65 L16.30 5.65 L13.00 1.85 L17.60 1.85 L22.90 7.55 L17.60 13.35 L13.00 13.35 L16.30 9.35 L9.20 9.35z" fill="#f2c47f" stroke="#c8922e" stroke-width="0.8" stroke-linejoin="round"/></svg>
<div class="t" style="left:537.745px;top:595.04px;font-size:11px;color:#000;transform:translateX(-50%);;-webkit-text-stroke:0.05px #000">1267</div>
<svg style="left:579px;top:591.85px;" width="32" height="16" viewBox="0 0 32 16"><path d="M9.20 5.65 L16.30 5.65 L13.00 1.85 L17.60 1.85 L22.90 7.55 L17.60 13.35 L13.00 13.35 L16.30 9.35 L9.20 9.35z" fill="#f2c47f" stroke="#c8922e" stroke-width="0.8" stroke-linejoin="round"/></svg>
<div class="t" style="left:634.8149999999999px;top:595.04px;font-size:11px;color:#000;transform:translateX(-50%);;-webkit-text-stroke:0.05px #000">1460</div>
<svg style="left:676px;top:591.85px;" width="32" height="16" viewBox="0 0 32 16"><path d="M13.90 1.20 L17.80 1.20 L17.80 8.00 L21.50 4.70 L21.50 10.10 L15.70 14.50 L10.10 10.10 L10.10 4.70 L13.90 8.00z" fill="#e05a35" stroke="#c13c1c" stroke-width="0.8" stroke-linejoin="round"/></svg>
<div class="t" style="left:731.885px;top:595.04px;font-size:11px;color:#000;transform:translateX(-50%);;-webkit-text-stroke:0.05px #000">682</div>
<div class="t" style="left:24px;top:650.94px;font-size:11px;color:#000;letter-spacing:0.42px;-webkit-text-stroke:0.05px #000">Leo Sterling</div>
<svg style="left:190px;top:647.75px;" width="32" height="16" viewBox="0 0 32 16"><path d="M9.20 5.65 L16.30 5.65 L13.00 1.85 L17.60 1.85 L22.90 7.55 L17.60 13.35 L13.00 13.35 L16.30 9.35 L9.20 9.35z" fill="#f2c47f" stroke="#c8922e" stroke-width="0.8" stroke-linejoin="round"/></svg>
<div class="t" style="left:246.535px;top:650.94px;font-size:11px;color:#000;transform:translateX(-50%);;-webkit-text-stroke:0.05px #000">1350</div>
<svg style="left:288px;top:647.75px;" width="32" height="16" viewBox="0 0 32 16"><path d="M13.90 1.20 L17.80 1.20 L17.80 8.00 L21.50 4.70 L21.50 10.10 L15.70 14.50 L10.10 10.10 L10.10 4.70 L13.90 8.00z" fill="#e05a35" stroke="#c13c1c" stroke-width="0.8" stroke-linejoin="round"/></svg>
<div class="t" style="left:343.605px;top:650.94px;font-size:11px;color:#000;transform:translateX(-50%);;-webkit-text-stroke:0.05px #000">649</div>
<svg style="left:385px;top:647.75px;" width="32" height="16" viewBox="0 0 32 16"><path d="M15.70 0.95 L21.40 6.35 L21.40 10.75 L17.80 8.75 L17.80 14.80 L13.80 14.80 L13.80 8.75 L10.10 10.75 L10.10 6.35z" fill="#5fa88a" stroke="#2e7a58" stroke-width="0.8" stroke-linejoin="round"/></svg>
<div class="t" style="left:440.67499999999995px;top:650.94px;font-size:11px;color:#000;transform:translateX(-50%);;-webkit-text-stroke:0.05px #000">1950</div>
<svg style="left:482px;top:647.75px;" width="32" height="16" viewBox="0 0 32 16"><path d="M13.90 1.20 L17.80 1.20 L17.80 8.00 L21.50 4.70 L21.50 10.10 L15.70 14.50 L10.10 10.10 L10.10 4.70 L13.90 8.00z" fill="#e05a35" stroke="#c13c1c" stroke-width="0.8" stroke-linejoin="round"/></svg>
<div class="t" style="left:537.745px;top:650.94px;font-size:11px;color:#000;transform:translateX(-50%);;-webkit-text-stroke:0.05px #000">748</div>
<svg style="left:579px;top:647.75px;" width="32" height="16" viewBox="0 0 32 16"><path d="M13.90 1.20 L17.80 1.20 L17.80 8.00 L21.50 4.70 L21.50 10.10 L15.70 14.50 L10.10 10.10 L10.10 4.70 L13.90 8.00z" fill="#e05a35" stroke="#c13c1c" stroke-width="0.8" stroke-linejoin="round"/></svg>
<div class="t" style="left:634.8149999999999px;top:650.94px;font-size:11px;color:#000;transform:translateX(-50%);;-webkit-text-stroke:0.05px #000">693</div>
<svg style="left:676px;top:647.75px;" width="32" height="16" viewBox="0 0 32 16"><path d="M9.20 5.65 L16.30 5.65 L13.00 1.85 L17.60 1.85 L22.90 7.55 L17.60 13.35 L13.00 13.35 L16.30 9.35 L9.20 9.35z" fill="#f2c47f" stroke="#c8922e" stroke-width="0.8" stroke-linejoin="round"/></svg>
<div class="t" style="left:731.885px;top:650.94px;font-size:11px;color:#000;transform:translateX(-50%);;-webkit-text-stroke:0.05px #000">1340</div>
<div class="t" style="left:24px;top:706.84px;font-size:11px;color:#000;letter-spacing:0.42px;-webkit-text-stroke:0.05px #000">Hazel Quinn</div>
<svg style="left:190px;top:703.6500000000001px;" width="32" height="16" viewBox="0 0 32 16"><path d="M9.20 5.65 L16.30 5.65 L13.00 1.85 L17.60 1.85 L22.90 7.55 L17.60 13.35 L13.00 13.35 L16.30 9.35 L9.20 9.35z" fill="#f2c47f" stroke="#c8922e" stroke-width="0.8" stroke-linejoin="round"/></svg>
<div class="t" style="left:246.535px;top:706.84px;font-size:11px;color:#000;transform:translateX(-50%);;-webkit-text-stroke:0.05px #000">1200</div>
<svg style="left:288px;top:703.6500000000001px;" width="32" height="16" viewBox="0 0 32 16"><path d="M13.90 1.20 L17.80 1.20 L17.80 8.00 L21.50 4.70 L21.50 10.10 L15.70 14.50 L10.10 10.10 L10.10 4.70 L13.90 8.00z" fill="#e05a35" stroke="#c13c1c" stroke-width="0.8" stroke-linejoin="round"/></svg>
<div class="t" style="left:343.605px;top:706.84px;font-size:11px;color:#000;transform:translateX(-50%);;-webkit-text-stroke:0.05px #000">745</div>
<svg style="left:385px;top:703.6500000000001px;" width="32" height="16" viewBox="0 0 32 16"><path d="M13.90 1.20 L17.80 1.20 L17.80 8.00 L21.50 4.70 L21.50 10.10 L15.70 14.50 L10.10 10.10 L10.10 4.70 L13.90 8.00z" fill="#e05a35" stroke="#c13c1c" stroke-width="0.8" stroke-linejoin="round"/></svg>
<div class="t" style="left:440.67499999999995px;top:706.84px;font-size:11px;color:#000;transform:translateX(-50%);;-webkit-text-stroke:0.05px #000">984</div>
<svg style="left:482px;top:703.6500000000001px;" width="32" height="16" viewBox="0 0 32 16"><path d="M9.20 5.65 L16.30 5.65 L13.00 1.85 L17.60 1.85 L22.90 7.55 L17.60 13.35 L13.00 13.35 L16.30 9.35 L9.20 9.35z" fill="#f2c47f" stroke="#c8922e" stroke-width="0.8" stroke-linejoin="round"/></svg>
<div class="t" style="left:537.745px;top:706.84px;font-size:11px;color:#000;transform:translateX(-50%);;-webkit-text-stroke:0.05px #000">1740</div>
<svg style="left:579px;top:703.6500000000001px;" width="32" height="16" viewBox="0 0 32 16"><path d="M13.90 1.20 L17.80 1.20 L17.80 8.00 L21.50 4.70 L21.50 10.10 L15.70 14.50 L10.10 10.10 L10.10 4.70 L13.90 8.00z" fill="#e05a35" stroke="#c13c1c" stroke-width="0.8" stroke-linejoin="round"/></svg>
<div class="t" style="left:634.8149999999999px;top:706.84px;font-size:11px;color:#000;transform:translateX(-50%);;-webkit-text-stroke:0.05px #000">869</div>
<svg style="left:676px;top:703.6500000000001px;" width="32" height="16" viewBox="0 0 32 16"><path d="M9.20 5.65 L16.30 5.65 L13.00 1.85 L17.60 1.85 L22.90 7.55 L17.60 13.35 L13.00 13.35 L16.30 9.35 L9.20 9.35z" fill="#f2c47f" stroke="#c8922e" stroke-width="0.8" stroke-linejoin="round"/></svg>
<div class="t" style="left:731.885px;top:706.84px;font-size:11px;color:#000;transform:translateX(-50%);;-webkit-text-stroke:0.05px #000">1237</div>
<div class="t" style="left:24px;top:762.74px;font-size:11px;color:#000;letter-spacing:0.42px;-webkit-text-stroke:0.05px #000">River James</div>
<svg style="left:190px;top:759.55px;" width="32" height="16" viewBox="0 0 32 16"><path d="M13.90 1.20 L17.80 1.20 L17.80 8.00 L21.50 4.70 L21.50 10.10 L15.70 14.50 L10.10 10.10 L10.10 4.70 L13.90 8.00z" fill="#e05a35" stroke="#c13c1c" stroke-width="0.8" stroke-linejoin="round"/></svg>
<div class="t" style="left:246.535px;top:762.74px;font-size:11px;color:#000;transform:translateX(-50%);;-webkit-text-stroke:0.05px #000">874</div>
<svg style="left:288px;top:759.55px;" width="32" height="16" viewBox="0 0 32 16"><path d="M13.90 1.20 L17.80 1.20 L17.80 8.00 L21.50 4.70 L21.50 10.10 L15.70 14.50 L10.10 10.10 L10.10 4.70 L13.90 8.00z" fill="#e05a35" stroke="#c13c1c" stroke-width="0.8" stroke-linejoin="round"/></svg>
<div class="t" style="left:343.605px;top:762.74px;font-size:11px;color:#000;transform:translateX(-50%);;-webkit-text-stroke:0.05px #000">597</div>
<svg style="left:385px;top:759.55px;" width="32" height="16" viewBox="0 0 32 16"><path d="M9.20 5.65 L16.30 5.65 L13.00 1.85 L17.60 1.85 L22.90 7.55 L17.60 13.35 L13.00 13.35 L16.30 9.35 L9.20 9.35z" fill="#f2c47f" stroke="#c8922e" stroke-width="0.8" stroke-linejoin="round"/></svg>
<div class="t" style="left:440.67499999999995px;top:762.74px;font-size:11px;color:#000;transform:translateX(-50%);;-webkit-text-stroke:0.05px #000">1359</div>
<svg style="left:482px;top:759.55px;" width="32" height="16" viewBox="0 0 32 16"><path d="M9.20 5.65 L16.30 5.65 L13.00 1.85 L17.60 1.85 L22.90 7.55 L17.60 13.35 L13.00 13.35 L16.30 9.35 L9.20 9.35z" fill="#f2c47f" stroke="#c8922e" stroke-width="0.8" stroke-linejoin="round"/></svg>
<div class="t" style="left:537.745px;top:762.74px;font-size:11px;color:#000;transform:translateX(-50%);;-webkit-text-stroke:0.05px #000">1295</div>
<svg style="left:579px;top:759.55px;" width="32" height="16" viewBox="0 0 32 16"><path d="M13.90 1.20 L17.80 1.20 L17.80 8.00 L21.50 4.70 L21.50 10.10 L15.70 14.50 L10.10 10.10 L10.10 4.70 L13.90 8.00z" fill="#e05a35" stroke="#c13c1c" stroke-width="0.8" stroke-linejoin="round"/></svg>
<div class="t" style="left:634.8149999999999px;top:762.74px;font-size:11px;color:#000;transform:translateX(-50%);;-webkit-text-stroke:0.05px #000">758</div>
<svg style="left:676px;top:759.55px;" width="32" height="16" viewBox="0 0 32 16"><path d="M13.90 1.20 L17.80 1.20 L17.80 8.00 L21.50 4.70 L21.50 10.10 L15.70 14.50 L10.10 10.10 L10.10 4.70 L13.90 8.00z" fill="#e05a35" stroke="#c13c1c" stroke-width="0.8" stroke-linejoin="round"/></svg>
<div class="t" style="left:731.885px;top:762.74px;font-size:11px;color:#000;transform:translateX(-50%);;-webkit-text-stroke:0.05px #000">971</div>
<div style="left:1632px;top:170px;width:18px;height:675px;background:#e6e6e6"></div>
<div style="left:1635px;top:172px;width:13px;height:12px;background:#fff;border:1px solid #c6c6c6"></div>
<svg style="left:1638.5px;top:175.5px;" width="7" height="4" viewBox="0 0 7 4"><path d="M0 4L3.5 0 7 4z" fill="#555"/></svg>
<div style="left:1635px;top:184px;width:13px;height:582px;background:#fff;border:1px solid #c6c6c6"></div>
<div style="left:1635px;top:766px;width:13px;height:66px;background:#dedede"></div>
<div style="left:1635px;top:832px;width:13px;height:12px;background:#fff;border:1px solid #c6c6c6"></div>
<svg style="left:1638.5px;top:836.5px;" width="7" height="4" viewBox="0 0 7 4"><path d="M0 0h7L3.5 4z" fill="#555"/></svg>
<div style="left:0px;top:845px;width:1650px;height:23px;background:#e6e6e6"></div>
<div style="left:0px;top:844px;width:1632px;height:1px;background:#9a9a9a"></div>
<div style="left:86px;top:844px;width:65px;height:21px;background:#fff;border-left:1px solid #c6c6c6;border-right:1px solid #c6c6c6"></div>
<div style="left:86px;top:863px;width:65px;height:2px;background:#217346"></div>
<div class="t" style="left:118.5px;top:850.61px;font-size:10.5px;color:#217346;transform:translateX(-50%);font-weight:bold">Tabelle1</div>
<svg style="left:23px;top:852px;" width="5" height="8" viewBox="0 0 5 8"><path d="M4.5 0L0.5 4 4.5 8z" fill="#c0c0c0"/></svg>
<svg style="left:47px;top:852px;" width="5" height="8" viewBox="0 0 5 8"><path d="M0.5 0L4.5 4 0.5 8z" fill="#c0c0c0"/></svg>
<svg style="left:179px;top:849px;" width="15" height="15" viewBox="0 0 15 15"><circle cx="7.2" cy="7.2" r="6.4" fill="none" stroke="#777" stroke-width="1.1"/><path d="M7.2 3.6v7.2M3.6 7.2h7.2" stroke="#555" stroke-width="1.4"/></svg>
<div style="left:990px;top:852px;width:1.6px;height:1.6px;background:#999"></div>
<div style="left:990px;top:855.5px;width:1.6px;height:1.6px;background:#999"></div>
<div style="left:990px;top:859px;width:1.6px;height:1.6px;background:#999"></div>
<div style="left:1005px;top:850px;width:626px;height:12px;background:#dedede;border:1px solid #c6c6c6"></div>
<div style="left:1005px;top:850px;width:13px;height:12px;background:#fff;border:1px solid #c6c6c6"></div>
<svg style="left:1009px;top:853px;" width="4" height="6" viewBox="0 0 4 6"><path d="M4 0L0 3 4 6z" fill="#555"/></svg>
<div style="left:1017px;top:850px;width:463px;height:12px;background:#fff;border:1px solid #c6c6c6"></div>
<div style="left:1619px;top:850px;width:12px;height:12px;background:#fff;border:1px solid #c6c6c6"></div>
<svg style="left:1623px;top:853px;" width="4" height="6" viewBox="0 0 4 6"><path d="M0 0L4 3 0 6z" fill="#555"/></svg>
<div style="left:0px;top:868px;width:1650px;height:19px;background:#f0f0f0"></div>
<div style="left:0px;top:867px;width:1650px;height:1px;background:#d4d4d4"></div>
<div class="t" style="left:7px;top:871.53px;font-size:10px;color:#555;">Bereit</div>
<div style="left:1399px;top:868px;width:33px;height:19px;background:#dadada"></div>
<svg style="left:1409px;top:871px;" width="12" height="12" viewBox="0 0 12 12"><rect x="0.5" y="0.5" width="11" height="11" fill="none" stroke="#666" stroke-width="1"/><path d="M4.2 0.5v11M7.8 0.5v11M0.5 4.2h11M0.5 7.8h11" stroke="#666" stroke-width="1"/></svg>
<svg style="left:1442px;top:871px;" width="12" height="12" viewBox="0 0 12 12"><rect x="0.5" y="0.5" width="11" height="11" fill="none" stroke="#666" stroke-width="1"/><rect x="3.5" y="2.5" width="5" height="7" fill="none" stroke="#666" stroke-width="1"/><path d="M4.5 5h3M4.5 7h3" stroke="#888" stroke-width="0.8"/></svg>
<svg style="left:1475px;top:871px;" width="12" height="12" viewBox="0 0 12 12"><rect x="0.5" y="0.5" width="11" height="11" fill="none" stroke="#666" stroke-width="1"/><path d="M3.5 0.5V8.5H11.5M6.5 0.5v4" fill="none" stroke="#666" stroke-width="1"/></svg>
<div style="left:1502px;top:876px;width:4px;height:1.4px;background:#555"></div>
<div style="left:1510px;top:876.5px;width:86px;height:1px;background:#b8b8b8"></div>
<div style="left:1551px;top:872px;width:4px;height:10px;background:#666"></div>
<svg style="left:1599px;top:872.5px;" width="8" height="8" viewBox="0 0 8 8"><path d="M3.8 0v7.6M0 3.8h7.6" stroke="#555" stroke-width="1.4"/></svg>
<div class="t" style="left:1642px;top:871.96px;font-size:9.5px;color:#666;transform:translateX(-100%);-webkit-text-stroke:0">100%</div>
<div style="left:0px;top:887px;width:1650px;height:41px;background:#621d5f"></div>
<svg style="left:606px;top:898px;" width="20" height="20" viewBox="0 0 20 20"><defs><linearGradient id="wg" x1="0" y1="0" x2="1" y2="1"><stop offset="0" stop-color="#6fd6fb"/><stop offset="1" stop-color="#1a8fe0"/></linearGradient></defs>
<rect x="0" y="0" width="9.6" height="9.6" fill="url(#wg)"/><rect x="10.4" y="0" width="9.6" height="9.6" fill="url(#wg)"/>
<rect x="0" y="10.4" width="9.6" height="9.6" fill="url(#wg)"/><rect x="10.4" y="10.4" width="9.6" height="9.6" fill="url(#wg)"/></svg>
<div style="left:637.5px;top:894.5px;width:188px;height:26px;background:#f3ebf3;border-radius:13px"></div>
<svg style="left:646.5px;top:902.5px;" width="14" height="12" viewBox="0 0 14 12"><circle cx="5.4" cy="5.2" r="4.3" fill="none" stroke="#333" stroke-width="1.5"/><path d="M8.6 8.4l3.4 3.2" stroke="#333" stroke-width="1.6"/></svg>
<div class="t" style="left:668.5px;top:902.39px;font-size:11px;color:#666;">Search</div>
<svg style="left:836px;top:897px;" width="21" height="21" viewBox="0 0 21 21"><circle cx="10.5" cy="10.5" r="10.5" fill="#34a853"/>
<path d="M10.5 10.5L1.4 5.25A10.5 10.5 0 0 1 19.6 5.25z" fill="#ea4335"/>
<path d="M10.5 10.5L19.6 5.25A10.5 10.5 0 0 1 10.5 21z" fill="#fbbc04"/>
<circle cx="10.5" cy="10.5" r="4.8" fill="#fff"/><circle cx="10.5" cy="10.5" r="3.8" fill="#1a73e8"/></svg>
<svg style="left:1025px;top:897px;" width="21" height="21" viewBox="0 0 21 21"><circle cx="10.5" cy="10.5" r="10.5" fill="#34a853"/>
<path d="M10.5 10.5L1.4 5.25A10.5 10.5 0 0 1 19.6 5.25z" fill="#ea4335"/>
<path d="M10.5 10.5L19.6 5.25A10.5 10.5 0 0 1 10.5 21z" fill="#fbbc04"/>
<circle cx="10.5" cy="10.5" r="4.8" fill="#fff"/><circle cx="10.5" cy="10.5" r="3.8" fill="#1a73e8"/></svg>
<svg style="left:1036px;top:893px;" width="14" height="14" viewBox="0 0 14 14"><circle cx="7" cy="7" r="7" fill="#f6d5d0"/><path d="M4 10q1-5 5-7q1 3-1 6z" fill="#e0602a"/></svg>
<div style="left:1033px;top:921px;width:5.5px;height:2.2px;background:#b89ab8;border-radius:1px"></div>
<svg style="left:874px;top:897px;" width="21" height="21" viewBox="0 0 21 21"><circle cx="10.5" cy="10.5" r="10.4" fill="#1ed760"/><path d="M4.6 7.6q6-2 11.8 1M5.3 10.8q5-1.6 9.8 0.9M5.9 13.8q4-1.2 7.8 0.7" fill="none" stroke="#111" stroke-width="1.7" stroke-linecap="round"/></svg>
<svg style="left:911px;top:898px;" width="22" height="19" viewBox="0 0 22 19"><path d="M0.5 1.2q0-1 1-1h6l2 2h11q1 0 1 1v14.4q0 1-1 1H1.5q-1 0-1-1z" fill="#f0b429"/><rect x="0.5" y="4" width="21" height="14.6" rx="1" fill="#fbd560"/><rect x="4.5" y="12.4" width="13" height="6.2" rx="1" fill="#1e88d8"/></svg>
<svg style="left:955px;top:900px;" width="10" height="15" viewBox="0 0 10 15"><path d="M0 0h2.8v15L0 14.6zM7.2 0H10v14.6L7.2 15z" fill="#b1060f"/><path d="M0 0h2.8L10 14.6 7.2 15z" fill="#e50914"/></svg>
<div style="left:981px;top:890px;width:34px;height:34px;background:#713270;border-radius:4px"></div>
<svg style="left:987.5px;top:897.5px;" width="21" height="19" viewBox="0 0 21 19"><path d="M7 1.5h12.5q1 0 1 1v14q0 1-1 1H7z" fill="#fff" stroke="#1d6f42" stroke-width="0.8"/><path d="M11 4h8M11 7h8M11 10h8M11 13h8M14.5 2v14" stroke="#33a266" stroke-width="0.9"/><path d="M0 2.2L11.5 0v19L0 16.8z" fill="#1d6f42"/><path d="M3 5.6l5 7.8M8 5.6l-5 7.8" stroke="#fff" stroke-width="1.6"/></svg>
<div style="left:991px;top:921px;width:14px;height:2.5px;background:#e89ae8;border-radius:1.5px"></div>
<svg style="left:1399.5px;top:904.5px;" width="10" height="6" viewBox="0 0 10 6"><path d="M0.6 5.4L4.7 1.1 8.8 5.4" fill="none" stroke="#f3e3f3" stroke-width="1.3"/></svg>
<svg style="left:1424.5px;top:899.5px;" width="16" height="16" viewBox="0 0 16 16"><path d="M2 7.5q0.8-5.6 6.2-5.6q3.2 0 5 2.6M13.2 1.6v3.4H9.8" fill="none" stroke="#e8d6e8" stroke-width="1.1"/><path d="M12 8.5q-0.6 4.5-4.6 5.4M1.6 14.4v-3.2h3.3" fill="none" stroke="#e8d6e8" stroke-width="1.1"/><circle cx="11" cy="11.8" r="3.1" fill="#1a7ae6"/></svg>
<div class="t" style="left:1464.5px;top:896.96px;font-size:9.5px;color:#f3e3f3;transform:translateX(-50%);">ENG</div>
<div class="t" style="left:1464px;top:910.66px;font-size:9.5px;color:#f3e3f3;transform:translateX(-50%);">US</div>
<svg style="left:1490px;top:902px;" width="15" height="11" viewBox="0 0 15 11"><path d="M0.8 4.2q6.7-5.6 13.4 0M3 6.6q4.5-3.6 9 0M5.2 9q2.3-1.6 4.6 0" fill="none" stroke="#f3e3f3" stroke-width="1.2"/><circle cx="7.5" cy="10.2" r="1" fill="#f3e3f3"/></svg>
<svg style="left:1510.5px;top:903px;" width="15" height="11" viewBox="0 0 15 11"><path d="M0.6 3.6h2.6L7 0.6v9.8L3.2 7.4H0.6z" fill="none" stroke="#f3e3f3" stroke-width="1.1"/><path d="M9 3.4q1.4 2.1 0 4.2M11 1.8q2.6 3.7 0 7.4" fill="none" stroke="#f3e3f3" stroke-width="1"/><path d="M13 0.6q3.4 4.9 0 9.8" fill="none" stroke="#8f6a8f" stroke-width="0.9"/></svg>
<svg style="left:1531px;top:900px;" width="15" height="13" viewBox="0 0 15 13"><rect x="0.6" y="4.6" width="12" height="7.6" rx="1.4" fill="none" stroke="#f3e3f3" stroke-width="1.1"/><rect x="12.8" y="7" width="1.6" height="2.8" fill="#f3e3f3"/><rect x="2" y="6" width="8" height="4.8" fill="#f3e3f3"/><path d="M3.4 0.2L1.6 4.2h2.2L2.6 7.6" fill="none" stroke="#f3e3f3" stroke-width="1"/></svg>
<div class="t" style="left:1613px;top:895.74px;font-size:10px;color:#f3e3f3;transform:translateX(-100%);">18:53</div>
<div class="t" style="left:1613px;top:909.11px;font-size:10.5px;color:#f3e3f3;transform:translateX(-100%);">2024/12/04</div>
<svg style="left:1620px;top:901px;" width="12" height="13" viewBox="0 0 12 13"><path d="M6 0.8q4 0 4.2 4.4v3.6l1.4 2H0.4l1.4-2V5.2Q2 0.8 6 0.8z" fill="#f2b2ef"/><path d="M4.4 11.6q1.6 1.6 3.2 0" fill="none" stroke="#f2b2ef" stroke-width="1.2"/></svg>
<svg style="left:1425px;top:810px;" width="175" height="60" viewBox="0 0 175 60"><defs><filter id="sh" x="-20%" y="-20%" width="150%" height="160%"><feGaussianBlur in="SourceAlpha" stdDeviation="2.2"/><feOffset dx="2.5" dy="3" result="o"/><feComponentTransfer><feFuncA type="linear" slope="0.7"/></feComponentTransfer><feMerge><feMergeNode/><feMergeNode in="SourceGraphic"/></feMerge></filter></defs>
<g filter="url(#sh)">
<path d="M10 8h15.3v6H16v20.3h9.3v17.4L15.7 40.3H10z" fill="#f39cb3"/>
<path d="M31.5 8h14.2v32.3H31.5v-6h8.2V14h-8.2z" fill="#8ed2f3"/>
<path d="M54.5 8h7.6l9 11.3L80 8h7.6L75 24.2l12.6 16H80L71 28.8 62 40.3h-7.6L67 24.2z" fill="#fafafa"/>
<path d="M91 8h22q12.4 0 12.4 12.4v7.5q0 12.4-12.4 12.4H91zM97.2 14v20.3h15.8q6.2 0 6.2-6.2v-7.9q0-6.2-6.2-6.2z" fill="#fafafa" fill-rule="evenodd"/>
<path d="M127.6 40.3V20.4Q127.6 8 140 8h9.6q12.4 0 12.4 12.4v19.9h-6.2V29.6h-22v10.7zM133.8 23.6h22v-3.2q0-6.4-6.2-6.4H140q-6.2 0-6.2 6.4z" fill="#fafafa" fill-rule="evenodd"/>
</g></svg>
</body></html>
